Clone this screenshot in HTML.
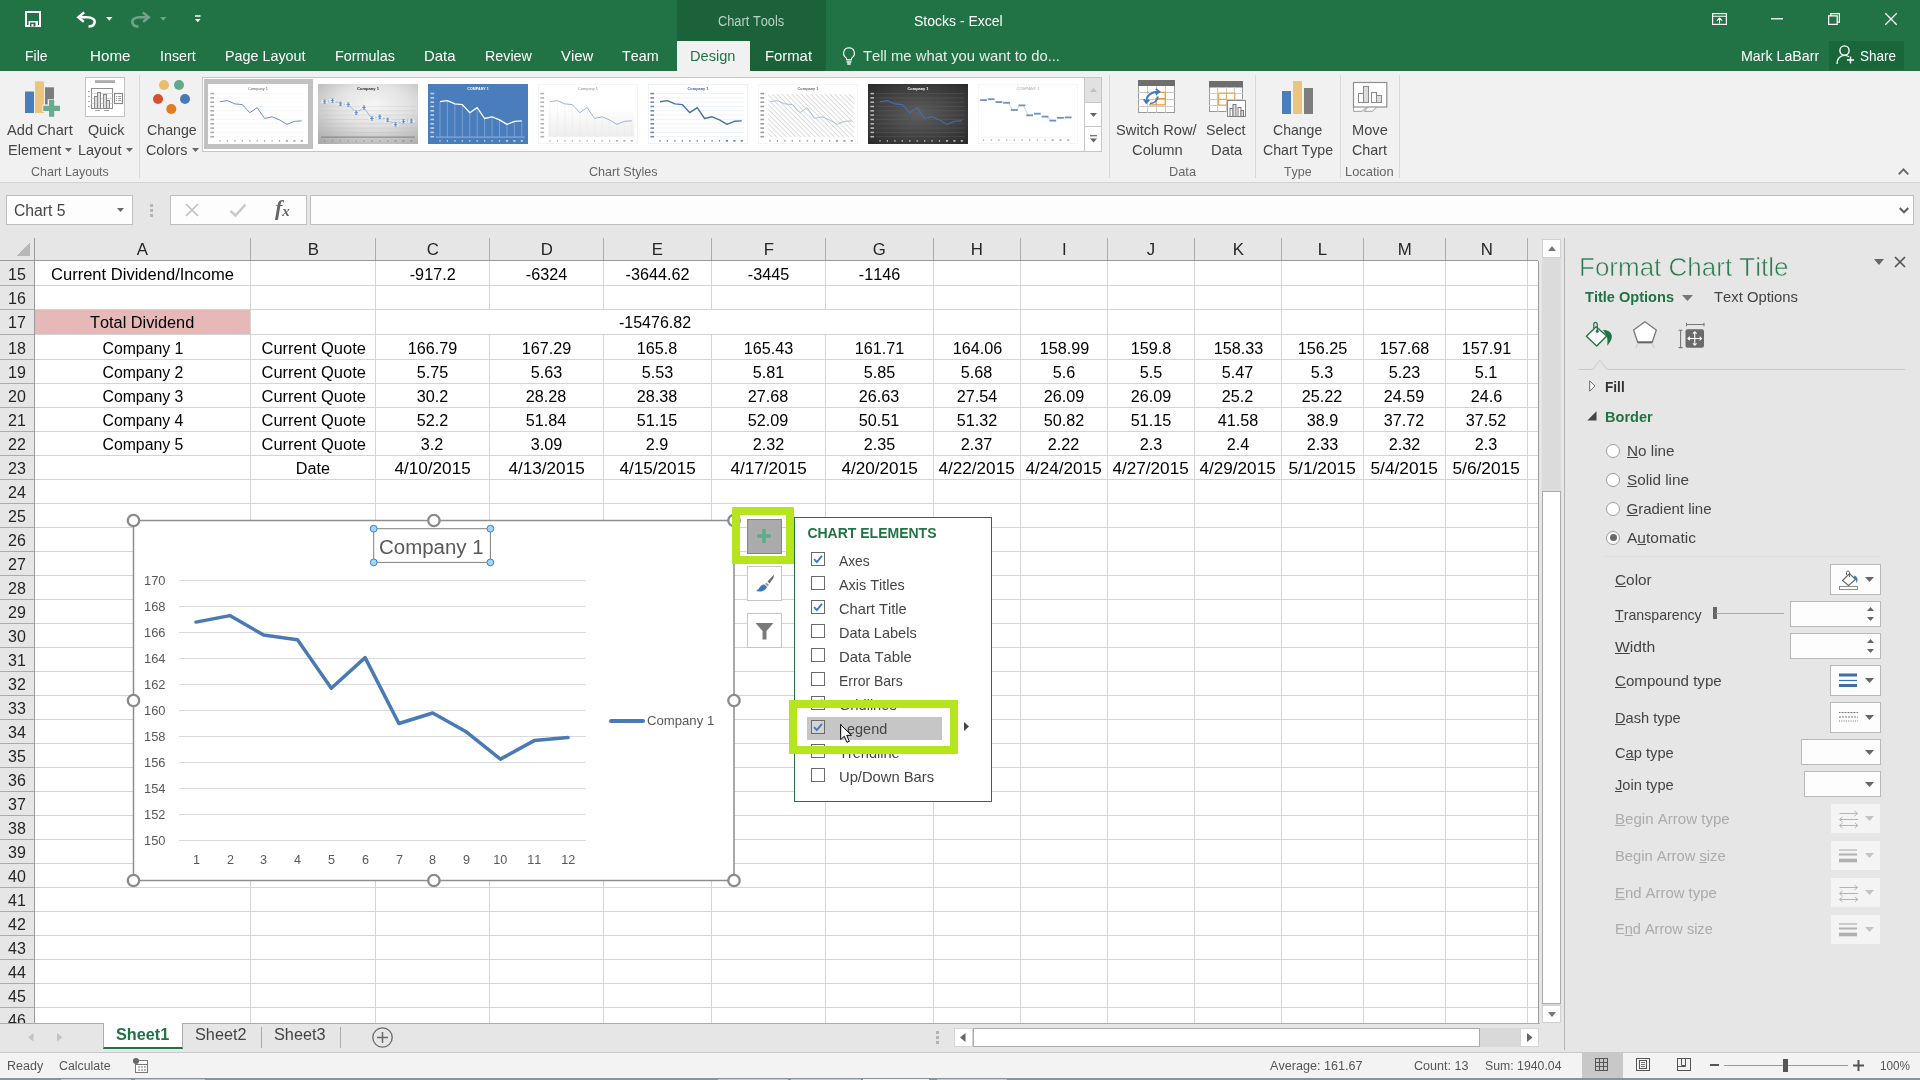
<!DOCTYPE html>
<html lang="en"><head><meta charset="utf-8"><title>Stocks - Excel</title>
<style>
html,body{margin:0;padding:0;}
body{width:1920px;height:1080px;overflow:hidden;position:relative;background:#e6e6e6;font-family:"Liberation Sans",sans-serif;color:#444;font-kerning:none;}
div,span.t,svg{position:absolute;box-sizing:border-box;}
span.t{white-space:nowrap;line-height:1;display:block;}
svg{overflow:visible;}
u{text-decoration:underline;text-underline-offset:1px;text-decoration-thickness:1px;}
</style></head><body>
<div id="app" style="left:0;top:0;width:1920px;height:1080px;will-change:transform;">

<div style="left:0px;top:0px;width:1920px;height:71px;background:#217346;"></div>
<div style="left:677px;top:0px;width:149px;height:71px;background:#1b6139;"></div>
<div style="left:677px;top:41px;width:73px;height:31px;background:#f1f1f1;"></div>
<div style="left:1829px;top:41px;width:75px;height:29px;background:#18663a;"></div>
<svg style="left:25px;top:11px;" width="16" height="16" viewBox="0 0 16 16"><rect x="1" y="1" width="14" height="14" fill="none" stroke="#fff" stroke-width="2"/><rect x="3.500" y="10" width="9.500" height="5.500" fill="#fff"/><rect x="5" y="11.500" width="5.500" height="4" fill="#217346"/><rect x="6.500" y="13" width="2" height="2.500" fill="#fff"/></svg>
<svg style="left:76px;top:11px;" width="22" height="17" viewBox="0 0 22 17"><path d="M3 6.300H11C16 6.300 19.300 8.500 18.600 11.600C18 14.400 15.500 15.500 12.500 15.500" fill="none" stroke="#fff" stroke-width="2.500"/><path d="M8.200 1.400L2.300 6.300L7.800 10.900" fill="none" stroke="#fff" stroke-width="2.500"/></svg>
<svg style="left:106px;top:17px;" width="6.5" height="3.7" viewBox="0 0 6.5 3.7"><path d="M0 0h6.500L3.250 3.700z" fill="#fff"/></svg>
<svg style="left:129px;top:11px;" width="22" height="17" viewBox="0 0 22 17"><g opacity="0.36"><path d="M19 6.300H11C6 6.300 2.700 8.500 3.400 11.600C4 14.400 6.500 15.500 9.500 15.500" fill="none" stroke="#fff" stroke-width="2.500"/><path d="M13.800 1.400L19.700 6.300L14.200 10.900" fill="none" stroke="#fff" stroke-width="2.500"/></g></svg>
<svg style="left:160px;top:17px;" width="6.5" height="3.7" viewBox="0 0 6.5 3.7"><path d="M0 0h6.500L3.250 3.700z" fill="#fff" opacity="0.36"/></svg>
<svg style="left:194.7px;top:15px;" width="5.6" height="8" viewBox="0 0 5.6 8"><path d="M0 1h5.600" stroke="#fff" stroke-width="1.500"/><path d="M0 4h5.600L2.800 7.300z" fill="#fff"/></svg>
<svg style="left:1712px;top:13px;" width="15" height="12" viewBox="0 0 15 12"><rect x="0.6" y="0.6" width="13.8" height="10.8" fill="none" stroke="#fff" stroke-width="1.2"/><path d="M0.6 3.2h13.8 M7.500 10.500V5.200 M4.900 7.700L7.500 5.100L10.100 7.700" fill="none" stroke="#fff" stroke-width="1.1"/></svg>
<svg style="left:1771px;top:18px;" width="12" height="2" viewBox="0 0 12 2"><path d="M0 0.8h12" stroke="#fff" stroke-width="1.3"/></svg>
<svg style="left:1828px;top:13px;" width="12" height="12" viewBox="0 0 12 12"><path d="M0.6 2.8h8.6v8.6h-8.6z M2.8 2.8v-2.2h8.6v8.6h-2.2" fill="none" stroke="#fff" stroke-width="1.2"/></svg>
<svg style="left:1885px;top:13px;" width="12" height="12" viewBox="0 0 12 12"><path d="M0.3 0.3L11.7 11.7 M11.7 0.3L0.3 11.7" stroke="#fff" stroke-width="1.3"/></svg>
<span class="t" style="left:718.30px;top:14.00px;font-size:14px;color:#b9d3c4;transform:scaleX(0.9149);transform-origin:0 50%;">Chart Tools</span>
<span class="t" style="left:914.30px;top:13.00px;font-size:15px;color:#fff;transform:scaleX(0.9334);transform-origin:0 50%;">Stocks - Excel</span>
<span class="t" style="left:25.00px;top:48.00px;font-size:15px;color:#fff;transform:scaleX(0.9309);transform-origin:0 50%;">File</span>
<span class="t" style="left:90.00px;top:48.00px;font-size:15px;color:#fff;transform:scaleX(1.0122);transform-origin:0 50%;">Home</span>
<span class="t" style="left:160.00px;top:48.00px;font-size:15px;color:#fff;transform:scaleX(0.9516);transform-origin:0 50%;">Insert</span>
<span class="t" style="left:225.00px;top:48.00px;font-size:15px;color:#fff;transform:scaleX(0.9557);transform-origin:0 50%;">Page Layout</span>
<span class="t" style="left:335.00px;top:48.00px;font-size:15px;color:#fff;transform:scaleX(0.9598);transform-origin:0 50%;">Formulas</span>
<span class="t" style="left:424.00px;top:48.00px;font-size:15px;color:#fff;transform:scaleX(0.9942);transform-origin:0 50%;">Data</span>
<span class="t" style="left:484.80px;top:48.00px;font-size:15px;color:#fff;transform:scaleX(0.9536);transform-origin:0 50%;">Review</span>
<span class="t" style="left:560.70px;top:48.00px;font-size:15px;color:#fff;transform:scaleX(0.9935);transform-origin:0 50%;">View</span>
<span class="t" style="left:622.00px;top:48.00px;font-size:15px;color:#fff;transform:scaleX(0.9546);transform-origin:0 50%;">Team</span>
<span class="t" style="left:765.00px;top:48.00px;font-size:15px;color:#fff;transform:scaleX(0.9894);transform-origin:0 50%;">Format</span>
<span class="t" style="left:690.00px;top:48.00px;font-size:15px;color:#217346;transform:scaleX(0.9745);transform-origin:0 50%;">Design</span>
<svg style="left:842.8px;top:47px;" width="12" height="18" viewBox="0 0 12 18"><path d="M6 0.800a5.400 5.400 0 0 0-3.100 9.800c.6.500.8 1.100.8 2.200h4.600c0-1.100.2-1.700.8-2.200A5.400 5.400 0 0 0 6 0.800z" fill="none" stroke="#fff" stroke-width="1.150"/><path d="M3.700 15h4.600 M4.300 17h3.400" stroke="#fff" stroke-width="1.300"/></svg>
<span class="t" style="left:862.60px;top:48.00px;font-size:15px;color:#e4efe8;transform:scaleX(0.9886);transform-origin:0 50%;">Tell me what you want to do...</span>
<span class="t" style="left:1740.60px;top:48.00px;font-size:15px;color:#fff;transform:scaleX(0.9476);transform-origin:0 50%;">Mark LaBarr</span>
<svg style="left:1836px;top:45px;" width="19" height="20" viewBox="0 0 19 20"><circle cx="8.5" cy="5.5" r="4.6" fill="none" stroke="#fff" stroke-width="1.4"/><path d="M1 19c0-5 3-8.6 7.5-8.6 1.8 0 3.3.5 4.5 1.4" fill="none" stroke="#fff" stroke-width="1.4"/><path d="M14.5 11.5v7 M11 15h7" stroke="#fff" stroke-width="1.4"/></svg>
<span class="t" style="left:1859.60px;top:48.00px;font-size:15px;color:#fff;transform:scaleX(0.8994);transform-origin:0 50%;">Share</span>
<div style="left:0px;top:71px;width:1920px;height:111px;background:#f1f1f1;"></div>
<div style="left:0px;top:182px;width:1920px;height:1px;background:#d2d2d2;"></div>
<div style="left:139px;top:75px;width:1px;height:103px;background:#d8d8d8;"></div>
<div style="left:1109px;top:75px;width:1px;height:103px;background:#d8d8d8;"></div>
<div style="left:1255px;top:75px;width:1px;height:103px;background:#d8d8d8;"></div>
<div style="left:1340px;top:75px;width:1px;height:103px;background:#d8d8d8;"></div>
<div style="left:1399px;top:75px;width:1px;height:103px;background:#d8d8d8;"></div>
<span class="t" style="left:30.50px;top:165.00px;font-size:13px;color:#666666;transform:scaleX(0.9613);transform-origin:0 50%;">Chart Layouts</span>
<span class="t" style="left:589.00px;top:165.00px;font-size:13px;color:#666666;transform:scaleX(0.9675);transform-origin:0 50%;">Chart Styles</span>
<span class="t" style="left:1169.00px;top:165.00px;font-size:13px;color:#666666;transform:scaleX(0.9832);transform-origin:0 50%;">Data</span>
<span class="t" style="left:1284.00px;top:165.00px;font-size:13px;color:#666666;transform:scaleX(0.9584);transform-origin:0 50%;">Type</span>
<span class="t" style="left:1345.00px;top:165.00px;font-size:13px;color:#666666;transform:scaleX(0.9908);transform-origin:0 50%;">Location</span>
<span class="t" style="left:6.70px;top:122.00px;font-size:15px;color:#444444;transform:scaleX(0.9743);transform-origin:0 50%;">Add Chart</span>
<span class="t" style="left:8.30px;top:142.00px;font-size:15px;color:#444444;transform:scaleX(0.9704);transform-origin:0 50%;">Element</span>
<span class="t" style="left:87.50px;top:122.00px;font-size:15px;color:#444444;transform:scaleX(0.9520);transform-origin:0 50%;">Quick</span>
<span class="t" style="left:78.30px;top:142.00px;font-size:15px;color:#444444;transform:scaleX(0.9637);transform-origin:0 50%;">Layout</span>
<span class="t" style="left:147.00px;top:122.00px;font-size:15px;color:#444444;transform:scaleX(0.9459);transform-origin:0 50%;">Change</span>
<span class="t" style="left:146.00px;top:142.00px;font-size:15px;color:#444444;transform:scaleX(0.9574);transform-origin:0 50%;">Colors</span>
<span class="t" style="left:1116.00px;top:122.00px;font-size:15px;color:#444444;transform:scaleX(0.9779);transform-origin:0 50%;">Switch Row/</span>
<span class="t" style="left:1132.00px;top:142.00px;font-size:15px;color:#444444;transform:scaleX(0.9828);transform-origin:0 50%;">Column</span>
<span class="t" style="left:1206.30px;top:122.00px;font-size:15px;color:#444444;transform:scaleX(0.9475);transform-origin:0 50%;">Select</span>
<span class="t" style="left:1210.50px;top:142.00px;font-size:15px;color:#444444;transform:scaleX(0.9847);transform-origin:0 50%;">Data</span>
<span class="t" style="left:1273.30px;top:122.00px;font-size:15px;color:#444444;transform:scaleX(0.9364);transform-origin:0 50%;">Change</span>
<span class="t" style="left:1262.50px;top:142.00px;font-size:15px;color:#444444;transform:scaleX(0.9435);transform-origin:0 50%;">Chart Type</span>
<span class="t" style="left:1351.70px;top:122.00px;font-size:15px;color:#444444;transform:scaleX(0.9760);transform-origin:0 50%;">Move</span>
<span class="t" style="left:1352.00px;top:142.00px;font-size:15px;color:#444444;transform:scaleX(0.9542);transform-origin:0 50%;">Chart</span>
<svg style="left:65.3px;top:148px;" width="7" height="4" viewBox="0 0 7 4"><path d="M0 0h7L3.5 4z" fill="#666"/></svg>
<svg style="left:126px;top:148px;" width="7" height="4" viewBox="0 0 7 4"><path d="M0 0h7L3.5 4z" fill="#666"/></svg>
<svg style="left:192px;top:148px;" width="7" height="4" viewBox="0 0 7 4"><path d="M0 0h7L3.5 4z" fill="#666"/></svg>
<svg style="left:25px;top:81px;" width="36" height="37" viewBox="0 0 36 37"><rect x="0" y="10.500" width="9" height="21.500" fill="#4a7ebb"/><rect x="10" y="0.300" width="9" height="31.700" fill="#ebc47d"/><rect x="20" y="6.300" width="9" height="17.500" fill="#7d7d7d"/><path d="M17.500 27.300h18 M26.500 18.300v18" stroke="#f1f1f1" stroke-width="7.600"/><path d="M18.300 27.400h16.700 M26.600 19v16.800" stroke="#69ab90" stroke-width="5.200"/></svg>
<svg style="left:85px;top:77px;" width="40" height="40" viewBox="0 0 40 40"><rect x="0.500" y="0.500" width="39" height="39" fill="#fff" stroke="#c2c2c2"/><rect x="10" y="3.200" width="20" height="2.800" fill="#ababab"/><rect x="6.500" y="11.500" width="21" height="20" fill="#fff" stroke="#8f8f8f"/><path d="M6.500 16.500h21 M6.500 21.500h21 M6.500 26.500h21" stroke="#d4d4d4"/><path d="M3 14.500h1.800 M3 19.500h1.800 M3 24.500h1.800 M3 29.500h1.800 M10 33.500h5 M19 33.500h5" stroke="#a5a5a5"/><rect x="9.500" y="19.500" width="3" height="12" fill="#ddd" stroke="#8a8a8a"/><rect x="12.500" y="15.500" width="3" height="16" fill="#ddd" stroke="#8a8a8a"/><rect x="18.500" y="17.500" width="3" height="14" fill="#ddd" stroke="#8a8a8a"/><rect x="21.500" y="23.500" width="3" height="8" fill="#ddd" stroke="#8a8a8a"/><rect x="29.500" y="16.500" width="8" height="10" fill="#fff" stroke="#8a8a8a" stroke-width="1.200"/><path d="M31 19.500h1.200 M33.200 19.500h3 M31 21.500h1.200 M33.200 21.500h3 M31 23.500h1.200 M33.200 23.500h3" stroke="#8a8a8a" stroke-width="0.900"/></svg>
<svg style="left:152px;top:79px;" width="40" height="36" viewBox="0 0 40 36"><circle cx="12" cy="6" r="5" fill="#eabd6e"/><circle cx="27" cy="6" r="5" fill="#62a88b"/><circle cx="6" cy="20" r="5" fill="#d5502f"/><circle cx="33" cy="20" r="5" fill="#4579b7"/><circle cx="19.300" cy="30" r="5" fill="#e27c1f"/></svg>
<div style="left:202px;top:77px;width:900px;height:75px;background:#fff;border:1px solid #c6c6c6;"></div>
<div style="left:203.5px;top:79px;width:109.5px;height:69.5px;background:#c1c1c1;"></div>
<svg width="0" height="0" style="left:0;top:0"><defs><radialGradient id="g1" cx="0.55" cy="0.35" r="0.800"><stop offset="0" stop-color="#f6f6f6"/><stop offset="0.450" stop-color="#e2e2e2"/><stop offset="1" stop-color="#ababab"/></radialGradient><radialGradient id="g6" cx="0.5" cy="0.5" r="0.750"><stop offset="0" stop-color="#5e5e5e"/><stop offset="1" stop-color="#262626"/></radialGradient><linearGradient id="g3" x1="0" y1="0" x2="0" y2="1"><stop offset="0" stop-color="#fff"/><stop offset="1" stop-color="#ededed"/></linearGradient><pattern id="h5" width="3.400" height="3.400" patternUnits="userSpaceOnUse" patternTransform="rotate(45)"><path d="M0 0.500H3.400" stroke="#bdbdbd" stroke-width="0.550"/></pattern></defs></svg>
<svg style="left:208px;top:84px;" width="100" height="60" viewBox="0 0 100 60"><rect x="0" y="0" width="100" height="60" fill="#fff"/><path d="M7.8 9.6H96.4" stroke="#efefef" stroke-width="0.500"/><path d="M7.8 13.9H96.4" stroke="#efefef" stroke-width="0.500"/><path d="M7.8 18.2H96.4" stroke="#efefef" stroke-width="0.500"/><path d="M7.8 22.5H96.4" stroke="#efefef" stroke-width="0.500"/><path d="M7.8 26.8H96.4" stroke="#efefef" stroke-width="0.500"/><path d="M7.8 31.1H96.4" stroke="#efefef" stroke-width="0.500"/><path d="M7.8 35.5H96.4" stroke="#efefef" stroke-width="0.500"/><path d="M7.8 39.8H96.4" stroke="#efefef" stroke-width="0.500"/><path d="M7.8 44.1H96.4" stroke="#efefef" stroke-width="0.500"/><path d="M7.8 48.4H96.4" stroke="#efefef" stroke-width="0.500"/><path d="M7.8 52.7H96.4" stroke="#efefef" stroke-width="0.500"/><rect x="2.400" y="8.8" width="3.700" height="1.600" fill="#8c8c8c" opacity="0.750"/><rect x="2.400" y="13.1" width="3.700" height="1.600" fill="#8c8c8c" opacity="0.750"/><rect x="2.400" y="17.4" width="3.700" height="1.600" fill="#8c8c8c" opacity="0.750"/><rect x="2.400" y="21.7" width="3.700" height="1.600" fill="#8c8c8c" opacity="0.750"/><rect x="2.400" y="26.0" width="3.700" height="1.600" fill="#8c8c8c" opacity="0.750"/><rect x="2.400" y="30.3" width="3.700" height="1.600" fill="#8c8c8c" opacity="0.750"/><rect x="2.400" y="34.7" width="3.700" height="1.600" fill="#8c8c8c" opacity="0.750"/><rect x="2.400" y="39.0" width="3.700" height="1.600" fill="#8c8c8c" opacity="0.750"/><rect x="2.400" y="43.3" width="3.700" height="1.600" fill="#8c8c8c" opacity="0.750"/><rect x="2.400" y="47.6" width="3.700" height="1.600" fill="#8c8c8c" opacity="0.750"/><rect x="2.400" y="51.9" width="3.700" height="1.600" fill="#8c8c8c" opacity="0.750"/><rect x="11.4" y="56.0" width="1.2" height="1.700" fill="#8c8c8c" opacity="0.750"/><rect x="18.8" y="56.0" width="1.2" height="1.700" fill="#8c8c8c" opacity="0.750"/><rect x="26.3" y="56.0" width="1.2" height="1.700" fill="#8c8c8c" opacity="0.750"/><rect x="33.7" y="56.0" width="1.2" height="1.700" fill="#8c8c8c" opacity="0.750"/><rect x="41.2" y="56.0" width="1.2" height="1.700" fill="#8c8c8c" opacity="0.750"/><rect x="48.6" y="56.0" width="1.2" height="1.700" fill="#8c8c8c" opacity="0.750"/><rect x="56.0" y="56.0" width="1.2" height="1.700" fill="#8c8c8c" opacity="0.750"/><rect x="63.5" y="56.0" width="1.2" height="1.700" fill="#8c8c8c" opacity="0.750"/><rect x="70.9" y="56.0" width="1.2" height="1.700" fill="#8c8c8c" opacity="0.750"/><rect x="77.9" y="56.0" width="2.2" height="1.700" fill="#8c8c8c" opacity="0.750"/><rect x="85.3" y="56.0" width="2.2" height="1.700" fill="#8c8c8c" opacity="0.750"/><rect x="92.7" y="56.0" width="2.2" height="1.700" fill="#8c8c8c" opacity="0.750"/><polyline points="12.0,17.7 19.4,16.6 26.9,19.9 34.3,20.6 41.8,28.7 49.2,23.6 56.6,34.5 64.1,32.8 71.5,35.9 79.0,40.4 86.4,37.3 93.8,36.9" fill="none" stroke="#6a8fc3" stroke-width="1.0" stroke-linejoin="round"/><text x="50" y="5.900" text-anchor="middle" font-size="3.9" font-weight="400" fill="#5f5f5f" font-family="Liberation Sans,sans-serif">Company 1</text></svg>
<svg style="left:318px;top:84px;" width="100" height="60" viewBox="0 0 100 60"><rect x="0" y="0" width="100" height="60" fill="url(#g1)"/><path d="M3.200 22.5H97" stroke="#bdbdbd" stroke-width="0.500" opacity="0.51"/><path d="M3.200 26.8H97" stroke="#bdbdbd" stroke-width="0.500" opacity="0.58"/><path d="M3.200 31.1H97" stroke="#bdbdbd" stroke-width="0.500" opacity="0.65"/><path d="M3.200 35.5H97" stroke="#bdbdbd" stroke-width="0.500" opacity="0.72"/><path d="M3.200 39.8H97" stroke="#bdbdbd" stroke-width="0.500" opacity="0.79"/><path d="M3.200 44.1H97" stroke="#bdbdbd" stroke-width="0.500" opacity="0.86"/><path d="M3.200 48.4H97" stroke="#bdbdbd" stroke-width="0.500" opacity="0.93"/><path d="M3.200 53.1H97" stroke="#707070" stroke-width="0.800"/><rect x="6.0" y="56.0" width="1.2" height="1.700" fill="#8c8c8c" opacity="0.750"/><rect x="13.9" y="56.0" width="1.2" height="1.700" fill="#8c8c8c" opacity="0.750"/><rect x="21.8" y="56.0" width="1.2" height="1.700" fill="#8c8c8c" opacity="0.750"/><rect x="29.7" y="56.0" width="1.2" height="1.700" fill="#8c8c8c" opacity="0.750"/><rect x="37.6" y="56.0" width="1.2" height="1.700" fill="#8c8c8c" opacity="0.750"/><rect x="45.4" y="56.0" width="1.2" height="1.700" fill="#8c8c8c" opacity="0.750"/><rect x="53.3" y="56.0" width="1.2" height="1.700" fill="#8c8c8c" opacity="0.750"/><rect x="61.2" y="56.0" width="1.2" height="1.700" fill="#8c8c8c" opacity="0.750"/><rect x="69.1" y="56.0" width="1.2" height="1.700" fill="#8c8c8c" opacity="0.750"/><rect x="76.5" y="56.0" width="2.2" height="1.700" fill="#8c8c8c" opacity="0.750"/><rect x="84.4" y="56.0" width="2.2" height="1.700" fill="#8c8c8c" opacity="0.750"/><rect x="92.3" y="56.0" width="2.2" height="1.700" fill="#8c8c8c" opacity="0.750"/><polyline points="6.6,17.7 14.5,16.6 22.4,19.9 30.3,20.6 38.2,28.7 46.0,23.6 53.9,34.5 61.8,32.8 69.7,35.9 77.6,40.4 85.5,37.3 93.4,36.9" fill="none" stroke="#5f86bd" stroke-width="0.500"/><ellipse cx="6.6" cy="17.7" rx="3.300" ry="1.900" fill="#f4f8fd"/><path d="M4.7 17.7H8.5 M5.4 16.1H7.8 M5.4 19.3H7.8 M6.6 16.1V19.3" stroke="#4a7ebb" stroke-width="0.800" fill="none"/><ellipse cx="14.5" cy="16.6" rx="3.300" ry="1.900" fill="#f4f8fd"/><path d="M12.6 16.6H16.4 M13.3 15.0H15.7 M13.3 18.2H15.7 M14.5 15.0V18.2" stroke="#4a7ebb" stroke-width="0.800" fill="none"/><ellipse cx="22.4" cy="19.9" rx="3.300" ry="1.900" fill="#f4f8fd"/><path d="M20.5 19.9H24.3 M21.2 18.3H23.6 M21.2 21.5H23.6 M22.4 18.3V21.5" stroke="#4a7ebb" stroke-width="0.800" fill="none"/><ellipse cx="30.3" cy="20.6" rx="3.300" ry="1.900" fill="#f4f8fd"/><path d="M28.4 20.6H32.2 M29.1 19.0H31.5 M29.1 22.2H31.5 M30.3 19.0V22.2" stroke="#4a7ebb" stroke-width="0.800" fill="none"/><ellipse cx="38.2" cy="28.7" rx="3.300" ry="1.900" fill="#f4f8fd"/><path d="M36.3 28.7H40.1 M37.0 27.1H39.4 M37.0 30.3H39.4 M38.2 27.1V30.3" stroke="#4a7ebb" stroke-width="0.800" fill="none"/><ellipse cx="46.0" cy="23.6" rx="3.300" ry="1.900" fill="#f4f8fd"/><path d="M44.1 23.6H47.9 M44.8 22.0H47.2 M44.8 25.2H47.2 M46.0 22.0V25.2" stroke="#4a7ebb" stroke-width="0.800" fill="none"/><ellipse cx="53.9" cy="34.5" rx="3.300" ry="1.900" fill="#f4f8fd"/><path d="M52.0 34.5H55.8 M52.7 32.9H55.1 M52.7 36.1H55.1 M53.9 32.9V36.1" stroke="#4a7ebb" stroke-width="0.800" fill="none"/><ellipse cx="61.8" cy="32.8" rx="3.300" ry="1.900" fill="#f4f8fd"/><path d="M59.9 32.8H63.7 M60.6 31.2H63.0 M60.6 34.4H63.0 M61.8 31.2V34.4" stroke="#4a7ebb" stroke-width="0.800" fill="none"/><ellipse cx="69.7" cy="35.9" rx="3.300" ry="1.900" fill="#f4f8fd"/><path d="M67.8 35.9H71.6 M68.5 34.3H70.9 M68.5 37.5H70.9 M69.7 34.3V37.5" stroke="#4a7ebb" stroke-width="0.800" fill="none"/><ellipse cx="77.6" cy="40.4" rx="3.300" ry="1.900" fill="#f4f8fd"/><path d="M75.7 40.4H79.5 M76.4 38.8H78.8 M76.4 42.0H78.8 M77.6 38.8V42.0" stroke="#4a7ebb" stroke-width="0.800" fill="none"/><ellipse cx="85.5" cy="37.3" rx="3.300" ry="1.900" fill="#f4f8fd"/><path d="M83.6 37.3H87.4 M84.3 35.7H86.7 M84.3 38.9H86.7 M85.5 35.7V38.9" stroke="#4a7ebb" stroke-width="0.800" fill="none"/><ellipse cx="93.4" cy="36.9" rx="3.300" ry="1.900" fill="#f4f8fd"/><path d="M91.5 36.9H95.3 M92.2 35.3H94.6 M92.2 38.5H94.6 M93.4 35.3V38.5" stroke="#4a7ebb" stroke-width="0.800" fill="none"/><text x="50" y="5.900" text-anchor="middle" font-size="4.1" font-weight="700" fill="#262626" font-family="Liberation Sans,sans-serif">Company 1</text></svg>
<svg style="left:428px;top:84px;" width="100" height="60" viewBox="0 0 100 60"><rect x="0" y="0" width="100" height="60" fill="#4a7dbc"/><path d="M12.0 17.7V52.7" stroke="#a9c1e2" stroke-width="0.500"/><path d="M19.4 16.6V52.7" stroke="#a9c1e2" stroke-width="0.500"/><path d="M26.9 19.9V52.7" stroke="#a9c1e2" stroke-width="0.500"/><path d="M34.3 20.6V52.7" stroke="#a9c1e2" stroke-width="0.500"/><path d="M41.8 28.7V52.7" stroke="#a9c1e2" stroke-width="0.500"/><path d="M49.2 23.6V52.7" stroke="#a9c1e2" stroke-width="0.500"/><path d="M56.6 34.5V52.7" stroke="#a9c1e2" stroke-width="0.500"/><path d="M64.1 32.8V52.7" stroke="#a9c1e2" stroke-width="0.500"/><path d="M71.5 35.9V52.7" stroke="#a9c1e2" stroke-width="0.500"/><path d="M79.0 40.4V52.7" stroke="#a9c1e2" stroke-width="0.500"/><path d="M86.4 37.3V52.7" stroke="#a9c1e2" stroke-width="0.500"/><path d="M93.8 36.9V52.7" stroke="#a9c1e2" stroke-width="0.500"/><path d="M7.8 53.1H96.9" stroke="#c9d8ec" stroke-width="0.600"/><rect x="2.400" y="8.8" width="3.700" height="1.600" fill="#e8eef7" opacity="0.750"/><rect x="2.400" y="13.1" width="3.700" height="1.600" fill="#e8eef7" opacity="0.750"/><rect x="2.400" y="17.4" width="3.700" height="1.600" fill="#e8eef7" opacity="0.750"/><rect x="2.400" y="21.7" width="3.700" height="1.600" fill="#e8eef7" opacity="0.750"/><rect x="2.400" y="26.0" width="3.700" height="1.600" fill="#e8eef7" opacity="0.750"/><rect x="2.400" y="30.3" width="3.700" height="1.600" fill="#e8eef7" opacity="0.750"/><rect x="2.400" y="34.7" width="3.700" height="1.600" fill="#e8eef7" opacity="0.750"/><rect x="2.400" y="39.0" width="3.700" height="1.600" fill="#e8eef7" opacity="0.750"/><rect x="2.400" y="43.3" width="3.700" height="1.600" fill="#e8eef7" opacity="0.750"/><rect x="2.400" y="47.6" width="3.700" height="1.600" fill="#e8eef7" opacity="0.750"/><rect x="2.400" y="51.9" width="3.700" height="1.600" fill="#e8eef7" opacity="0.750"/><rect x="11.4" y="56.0" width="1.2" height="1.700" fill="#e8eef7" opacity="0.750"/><rect x="18.8" y="56.0" width="1.2" height="1.700" fill="#e8eef7" opacity="0.750"/><rect x="26.3" y="56.0" width="1.2" height="1.700" fill="#e8eef7" opacity="0.750"/><rect x="33.7" y="56.0" width="1.2" height="1.700" fill="#e8eef7" opacity="0.750"/><rect x="41.2" y="56.0" width="1.2" height="1.700" fill="#e8eef7" opacity="0.750"/><rect x="48.6" y="56.0" width="1.2" height="1.700" fill="#e8eef7" opacity="0.750"/><rect x="56.0" y="56.0" width="1.2" height="1.700" fill="#e8eef7" opacity="0.750"/><rect x="63.5" y="56.0" width="1.2" height="1.700" fill="#e8eef7" opacity="0.750"/><rect x="70.9" y="56.0" width="1.2" height="1.700" fill="#e8eef7" opacity="0.750"/><rect x="77.9" y="56.0" width="2.2" height="1.700" fill="#e8eef7" opacity="0.750"/><rect x="85.3" y="56.0" width="2.2" height="1.700" fill="#e8eef7" opacity="0.750"/><rect x="92.7" y="56.0" width="2.2" height="1.700" fill="#e8eef7" opacity="0.750"/><polyline points="12.0,17.7 19.4,16.6 26.9,19.9 34.3,20.6 41.8,28.7 49.2,23.6 56.6,34.5 64.1,32.8 71.5,35.9 79.0,40.4 86.4,37.3 93.8,36.9" fill="none" stroke="#fff" stroke-width="1.3" stroke-linejoin="round"/><text x="50" y="5.900" text-anchor="middle" font-size="3.6" font-weight="700" fill="#fff" font-family="Liberation Sans,sans-serif">COMPANY 1</text></svg>
<svg style="left:538px;top:84px;" width="100" height="60" viewBox="0 0 100 60"><rect x="0" y="0" width="100" height="60" fill="#fff"/><rect x="0.300" y="0.300" width="99.4" height="59.4" fill="none" stroke="#ededed" stroke-width="0.600"/><rect x="10.3" y="23.6" width="86.10000000000001" height="29.1" fill="url(#g3)"/><path d="M12.0 17.7V52.7" stroke="#e9e9e9" stroke-width="0.500"/><path d="M19.4 16.6V52.7" stroke="#e9e9e9" stroke-width="0.500"/><path d="M26.9 19.9V52.7" stroke="#e9e9e9" stroke-width="0.500"/><path d="M34.3 20.6V52.7" stroke="#e9e9e9" stroke-width="0.500"/><path d="M41.8 28.7V52.7" stroke="#e9e9e9" stroke-width="0.500"/><path d="M49.2 23.6V52.7" stroke="#e9e9e9" stroke-width="0.500"/><path d="M56.6 34.5V52.7" stroke="#e9e9e9" stroke-width="0.500"/><path d="M64.1 32.8V52.7" stroke="#e9e9e9" stroke-width="0.500"/><path d="M71.5 35.9V52.7" stroke="#e9e9e9" stroke-width="0.500"/><path d="M79.0 40.4V52.7" stroke="#e9e9e9" stroke-width="0.500"/><path d="M86.4 37.3V52.7" stroke="#e9e9e9" stroke-width="0.500"/><path d="M93.8 36.9V52.7" stroke="#e9e9e9" stroke-width="0.500"/><rect x="2.400" y="8.8" width="3.700" height="1.600" fill="#9a9a9a" opacity="0.750"/><rect x="2.400" y="13.1" width="3.700" height="1.600" fill="#9a9a9a" opacity="0.750"/><rect x="2.400" y="17.4" width="3.700" height="1.600" fill="#9a9a9a" opacity="0.750"/><rect x="2.400" y="21.7" width="3.700" height="1.600" fill="#9a9a9a" opacity="0.750"/><rect x="2.400" y="26.0" width="3.700" height="1.600" fill="#9a9a9a" opacity="0.750"/><rect x="2.400" y="30.3" width="3.700" height="1.600" fill="#9a9a9a" opacity="0.750"/><rect x="2.400" y="34.7" width="3.700" height="1.600" fill="#9a9a9a" opacity="0.750"/><rect x="2.400" y="39.0" width="3.700" height="1.600" fill="#9a9a9a" opacity="0.750"/><rect x="2.400" y="43.3" width="3.700" height="1.600" fill="#9a9a9a" opacity="0.750"/><rect x="2.400" y="47.6" width="3.700" height="1.600" fill="#9a9a9a" opacity="0.750"/><rect x="2.400" y="51.9" width="3.700" height="1.600" fill="#9a9a9a" opacity="0.750"/><rect x="11.4" y="56.0" width="1.2" height="1.700" fill="#9a9a9a" opacity="0.750"/><rect x="18.8" y="56.0" width="1.2" height="1.700" fill="#9a9a9a" opacity="0.750"/><rect x="26.3" y="56.0" width="1.2" height="1.700" fill="#9a9a9a" opacity="0.750"/><rect x="33.7" y="56.0" width="1.2" height="1.700" fill="#9a9a9a" opacity="0.750"/><rect x="41.2" y="56.0" width="1.2" height="1.700" fill="#9a9a9a" opacity="0.750"/><rect x="48.6" y="56.0" width="1.2" height="1.700" fill="#9a9a9a" opacity="0.750"/><rect x="56.0" y="56.0" width="1.2" height="1.700" fill="#9a9a9a" opacity="0.750"/><rect x="63.5" y="56.0" width="1.2" height="1.700" fill="#9a9a9a" opacity="0.750"/><rect x="70.9" y="56.0" width="1.2" height="1.700" fill="#9a9a9a" opacity="0.750"/><rect x="77.9" y="56.0" width="2.2" height="1.700" fill="#9a9a9a" opacity="0.750"/><rect x="85.3" y="56.0" width="2.2" height="1.700" fill="#9a9a9a" opacity="0.750"/><rect x="92.7" y="56.0" width="2.2" height="1.700" fill="#9a9a9a" opacity="0.750"/><polyline points="12.0,17.7 19.4,16.6 26.9,19.9 34.3,20.6 41.8,28.7 49.2,23.6 56.6,34.5 64.1,32.8 71.5,35.9 79.0,40.4 86.4,37.3 93.8,36.9" fill="none" stroke="#9fb4d6" stroke-width="1.0" stroke-linejoin="round"/><text x="50" y="5.900" text-anchor="middle" font-size="3.9" font-weight="400" fill="#8a8a8a" font-family="Liberation Sans,sans-serif">Company 1</text></svg>
<svg style="left:648px;top:84px;" width="100" height="60" viewBox="0 0 100 60"><rect x="0" y="0" width="100" height="60" fill="#fff"/><rect x="0.300" y="0.300" width="99.4" height="59.4" fill="none" stroke="#e4ebf5" stroke-width="0.600"/><path d="M7.8 9.6H96.4" stroke="#dce5f2" stroke-width="0.500"/><path d="M7.8 13.9H96.4" stroke="#dce5f2" stroke-width="0.500"/><path d="M7.8 18.2H96.4" stroke="#dce5f2" stroke-width="0.500"/><path d="M7.8 22.5H96.4" stroke="#dce5f2" stroke-width="0.500"/><path d="M7.8 26.8H96.4" stroke="#dce5f2" stroke-width="0.500"/><path d="M7.8 31.1H96.4" stroke="#dce5f2" stroke-width="0.500"/><path d="M7.8 35.5H96.4" stroke="#dce5f2" stroke-width="0.500"/><path d="M7.8 39.8H96.4" stroke="#dce5f2" stroke-width="0.500"/><path d="M7.8 44.1H96.4" stroke="#dce5f2" stroke-width="0.500"/><path d="M7.8 48.4H96.4" stroke="#dce5f2" stroke-width="0.500"/><path d="M7.8 52.7H96.4" stroke="#dce5f2" stroke-width="0.500"/><rect x="2.400" y="8.8" width="3.700" height="1.600" fill="#3d5f99" opacity="0.750"/><rect x="2.400" y="13.1" width="3.700" height="1.600" fill="#3d5f99" opacity="0.750"/><rect x="2.400" y="17.4" width="3.700" height="1.600" fill="#3d5f99" opacity="0.750"/><rect x="2.400" y="21.7" width="3.700" height="1.600" fill="#3d5f99" opacity="0.750"/><rect x="2.400" y="26.0" width="3.700" height="1.600" fill="#3d5f99" opacity="0.750"/><rect x="2.400" y="30.3" width="3.700" height="1.600" fill="#3d5f99" opacity="0.750"/><rect x="2.400" y="34.7" width="3.700" height="1.600" fill="#3d5f99" opacity="0.750"/><rect x="2.400" y="39.0" width="3.700" height="1.600" fill="#3d5f99" opacity="0.750"/><rect x="2.400" y="43.3" width="3.700" height="1.600" fill="#3d5f99" opacity="0.750"/><rect x="2.400" y="47.6" width="3.700" height="1.600" fill="#3d5f99" opacity="0.750"/><rect x="2.400" y="51.9" width="3.700" height="1.600" fill="#3d5f99" opacity="0.750"/><rect x="11.4" y="56.0" width="1.2" height="1.700" fill="#3d5f99" opacity="0.750"/><rect x="18.8" y="56.0" width="1.2" height="1.700" fill="#3d5f99" opacity="0.750"/><rect x="26.3" y="56.0" width="1.2" height="1.700" fill="#3d5f99" opacity="0.750"/><rect x="33.7" y="56.0" width="1.2" height="1.700" fill="#3d5f99" opacity="0.750"/><rect x="41.2" y="56.0" width="1.2" height="1.700" fill="#3d5f99" opacity="0.750"/><rect x="48.6" y="56.0" width="1.2" height="1.700" fill="#3d5f99" opacity="0.750"/><rect x="56.0" y="56.0" width="1.2" height="1.700" fill="#3d5f99" opacity="0.750"/><rect x="63.5" y="56.0" width="1.2" height="1.700" fill="#3d5f99" opacity="0.750"/><rect x="70.9" y="56.0" width="1.2" height="1.700" fill="#3d5f99" opacity="0.750"/><rect x="77.9" y="56.0" width="2.2" height="1.700" fill="#3d5f99" opacity="0.750"/><rect x="85.3" y="56.0" width="2.2" height="1.700" fill="#3d5f99" opacity="0.750"/><rect x="92.7" y="56.0" width="2.2" height="1.700" fill="#3d5f99" opacity="0.750"/><polyline points="12.0,17.7 19.4,16.6 26.9,19.9 34.3,20.6 41.8,28.7 49.2,23.6 56.6,34.5 64.1,32.8 71.5,35.9 79.0,40.4 86.4,37.3 93.8,36.9" fill="none" stroke="#4d6fa3" stroke-width="1.4" stroke-linejoin="round"/><text x="50" y="5.900" text-anchor="middle" font-size="3.9" font-weight="700" fill="#3d6099" font-family="Liberation Sans,sans-serif">Company 1</text></svg>
<svg style="left:758px;top:84px;" width="100" height="60" viewBox="0 0 100 60"><rect x="0" y="0" width="100" height="60" fill="#fff"/><rect x="0.300" y="0.300" width="99.4" height="59.4" fill="none" stroke="#ededed" stroke-width="0.600"/><rect x="10.3" y="10.1" width="86.10000000000001" height="43.1" fill="url(#h5)"/><rect x="2.400" y="8.8" width="3.700" height="1.600" fill="#7a7a7a" opacity="0.750"/><rect x="2.400" y="13.1" width="3.700" height="1.600" fill="#7a7a7a" opacity="0.750"/><rect x="2.400" y="17.4" width="3.700" height="1.600" fill="#7a7a7a" opacity="0.750"/><rect x="2.400" y="21.7" width="3.700" height="1.600" fill="#7a7a7a" opacity="0.750"/><rect x="2.400" y="26.0" width="3.700" height="1.600" fill="#7a7a7a" opacity="0.750"/><rect x="2.400" y="30.3" width="3.700" height="1.600" fill="#7a7a7a" opacity="0.750"/><rect x="2.400" y="34.7" width="3.700" height="1.600" fill="#7a7a7a" opacity="0.750"/><rect x="2.400" y="39.0" width="3.700" height="1.600" fill="#7a7a7a" opacity="0.750"/><rect x="2.400" y="43.3" width="3.700" height="1.600" fill="#7a7a7a" opacity="0.750"/><rect x="2.400" y="47.6" width="3.700" height="1.600" fill="#7a7a7a" opacity="0.750"/><rect x="2.400" y="51.9" width="3.700" height="1.600" fill="#7a7a7a" opacity="0.750"/><rect x="11.4" y="56.0" width="1.2" height="1.700" fill="#7a7a7a" opacity="0.750"/><rect x="18.8" y="56.0" width="1.2" height="1.700" fill="#7a7a7a" opacity="0.750"/><rect x="26.3" y="56.0" width="1.2" height="1.700" fill="#7a7a7a" opacity="0.750"/><rect x="33.7" y="56.0" width="1.2" height="1.700" fill="#7a7a7a" opacity="0.750"/><rect x="41.2" y="56.0" width="1.2" height="1.700" fill="#7a7a7a" opacity="0.750"/><rect x="48.6" y="56.0" width="1.2" height="1.700" fill="#7a7a7a" opacity="0.750"/><rect x="56.0" y="56.0" width="1.2" height="1.700" fill="#7a7a7a" opacity="0.750"/><rect x="63.5" y="56.0" width="1.2" height="1.700" fill="#7a7a7a" opacity="0.750"/><rect x="70.9" y="56.0" width="1.2" height="1.700" fill="#7a7a7a" opacity="0.750"/><rect x="77.9" y="56.0" width="2.2" height="1.700" fill="#7a7a7a" opacity="0.750"/><rect x="85.3" y="56.0" width="2.2" height="1.700" fill="#7a7a7a" opacity="0.750"/><rect x="92.7" y="56.0" width="2.2" height="1.700" fill="#7a7a7a" opacity="0.750"/><polyline points="12.0,17.7 19.4,16.6 26.9,19.9 34.3,20.6 41.8,28.7 49.2,23.6 56.6,34.5 64.1,32.8 71.5,35.9 79.0,40.4 86.4,37.3 93.8,36.9" fill="none" stroke="#a9bfde" stroke-width="1.0" stroke-linejoin="round"/><text x="50" y="5.900" text-anchor="middle" font-size="3.9" font-weight="700" fill="#6a6a6a" font-family="Liberation Sans,sans-serif">Company 1</text></svg>
<svg style="left:868px;top:84px;" width="100" height="60" viewBox="0 0 100 60"><rect x="0" y="0" width="100" height="60" fill="url(#g6)"/><path d="M7.8 9.6H96.4" stroke="#5d5d5d" stroke-width="0.500"/><path d="M7.8 13.9H96.4" stroke="#5d5d5d" stroke-width="0.500"/><path d="M7.8 18.2H96.4" stroke="#5d5d5d" stroke-width="0.500"/><path d="M7.8 22.5H96.4" stroke="#5d5d5d" stroke-width="0.500"/><path d="M7.8 26.8H96.4" stroke="#5d5d5d" stroke-width="0.500"/><path d="M7.8 31.1H96.4" stroke="#5d5d5d" stroke-width="0.500"/><path d="M7.8 35.5H96.4" stroke="#5d5d5d" stroke-width="0.500"/><path d="M7.8 39.8H96.4" stroke="#5d5d5d" stroke-width="0.500"/><path d="M7.8 44.1H96.4" stroke="#5d5d5d" stroke-width="0.500"/><path d="M7.8 48.4H96.4" stroke="#5d5d5d" stroke-width="0.500"/><path d="M7.8 52.7H96.4" stroke="#5d5d5d" stroke-width="0.500"/><rect x="2.400" y="8.8" width="3.700" height="1.600" fill="#e0e0e0" opacity="0.750"/><rect x="2.400" y="13.1" width="3.700" height="1.600" fill="#e0e0e0" opacity="0.750"/><rect x="2.400" y="17.4" width="3.700" height="1.600" fill="#e0e0e0" opacity="0.750"/><rect x="2.400" y="21.7" width="3.700" height="1.600" fill="#e0e0e0" opacity="0.750"/><rect x="2.400" y="26.0" width="3.700" height="1.600" fill="#e0e0e0" opacity="0.750"/><rect x="2.400" y="30.3" width="3.700" height="1.600" fill="#e0e0e0" opacity="0.750"/><rect x="2.400" y="34.7" width="3.700" height="1.600" fill="#e0e0e0" opacity="0.750"/><rect x="2.400" y="39.0" width="3.700" height="1.600" fill="#e0e0e0" opacity="0.750"/><rect x="2.400" y="43.3" width="3.700" height="1.600" fill="#e0e0e0" opacity="0.750"/><rect x="2.400" y="47.6" width="3.700" height="1.600" fill="#e0e0e0" opacity="0.750"/><rect x="2.400" y="51.9" width="3.700" height="1.600" fill="#e0e0e0" opacity="0.750"/><rect x="11.4" y="56.0" width="1.2" height="1.700" fill="#e0e0e0" opacity="0.750"/><rect x="18.8" y="56.0" width="1.2" height="1.700" fill="#e0e0e0" opacity="0.750"/><rect x="26.3" y="56.0" width="1.2" height="1.700" fill="#e0e0e0" opacity="0.750"/><rect x="33.7" y="56.0" width="1.2" height="1.700" fill="#e0e0e0" opacity="0.750"/><rect x="41.2" y="56.0" width="1.2" height="1.700" fill="#e0e0e0" opacity="0.750"/><rect x="48.6" y="56.0" width="1.2" height="1.700" fill="#e0e0e0" opacity="0.750"/><rect x="56.0" y="56.0" width="1.2" height="1.700" fill="#e0e0e0" opacity="0.750"/><rect x="63.5" y="56.0" width="1.2" height="1.700" fill="#e0e0e0" opacity="0.750"/><rect x="70.9" y="56.0" width="1.2" height="1.700" fill="#e0e0e0" opacity="0.750"/><rect x="77.9" y="56.0" width="2.2" height="1.700" fill="#e0e0e0" opacity="0.750"/><rect x="85.3" y="56.0" width="2.2" height="1.700" fill="#e0e0e0" opacity="0.750"/><rect x="92.7" y="56.0" width="2.2" height="1.700" fill="#e0e0e0" opacity="0.750"/><polyline points="12.0,17.7 19.4,16.6 26.9,19.9 34.3,20.6 41.8,28.7 49.2,23.6 56.6,34.5 64.1,32.8 71.5,35.9 79.0,40.4 86.4,37.3 93.8,36.9" fill="none" stroke="#3f6fb5" stroke-width="1.1" stroke-linejoin="round"/><text x="50" y="5.900" text-anchor="middle" font-size="3.9" font-weight="700" fill="#fff" font-family="Liberation Sans,sans-serif">Company 1</text></svg>
<svg style="left:978px;top:84px;" width="100" height="60" viewBox="0 0 100 60"><rect x="0" y="0" width="100" height="60" fill="#fff"/><rect x="0.300" y="0.300" width="99.4" height="59.4" fill="none" stroke="#efefef" stroke-width="0.600"/><rect x="4.9" y="55.3" width="1.2" height="1.700" fill="#9a9a9a" opacity="0.750"/><rect x="12.6" y="55.3" width="1.2" height="1.700" fill="#9a9a9a" opacity="0.750"/><rect x="20.3" y="55.3" width="1.2" height="1.700" fill="#9a9a9a" opacity="0.750"/><rect x="28.0" y="55.3" width="1.2" height="1.700" fill="#9a9a9a" opacity="0.750"/><rect x="35.7" y="55.3" width="1.2" height="1.700" fill="#9a9a9a" opacity="0.750"/><rect x="43.4" y="55.3" width="1.2" height="1.700" fill="#9a9a9a" opacity="0.750"/><rect x="51.1" y="55.3" width="1.2" height="1.700" fill="#9a9a9a" opacity="0.750"/><rect x="58.8" y="55.3" width="1.2" height="1.700" fill="#9a9a9a" opacity="0.750"/><rect x="66.5" y="55.3" width="1.2" height="1.700" fill="#9a9a9a" opacity="0.750"/><rect x="73.7" y="55.3" width="2.2" height="1.700" fill="#9a9a9a" opacity="0.750"/><rect x="81.4" y="55.3" width="2.2" height="1.700" fill="#9a9a9a" opacity="0.750"/><rect x="89.1" y="55.3" width="2.2" height="1.700" fill="#9a9a9a" opacity="0.750"/><path d="M3 53.200H93" stroke="#e3e3e3" stroke-width="0.500"/><path d="M30.6 19.8L34.3 25.0" stroke="#7f9cc9" stroke-width="0.400"/><path d="M38.3 27.0L42.0 20.4" stroke="#7f9cc9" stroke-width="0.400"/><path d="M46.0 22.4L49.7 30.3" stroke="#7f9cc9" stroke-width="0.400"/><path d="M69.1 33.6L72.8 35.6" stroke="#7f9cc9" stroke-width="0.400"/><rect x="2.1" y="15.2" width="6.800" height="1.800" fill="#4f7fc0" opacity="0.850"/><rect x="9.8" y="14.3" width="6.800" height="1.800" fill="#4f7fc0" opacity="0.850"/><rect x="17.5" y="17.2" width="6.800" height="1.800" fill="#4f7fc0" opacity="0.850"/><rect x="25.2" y="17.9" width="6.800" height="1.800" fill="#4f7fc0" opacity="0.850"/><rect x="32.9" y="25.1" width="6.800" height="1.800" fill="#4f7fc0" opacity="0.850"/><rect x="40.6" y="20.5" width="6.800" height="1.800" fill="#4f7fc0" opacity="0.850"/><rect x="48.3" y="30.4" width="6.800" height="1.800" fill="#4f7fc0" opacity="0.850"/><rect x="56.0" y="28.8" width="6.800" height="1.800" fill="#4f7fc0" opacity="0.850"/><rect x="63.7" y="31.7" width="6.800" height="1.800" fill="#4f7fc0" opacity="0.850"/><rect x="71.4" y="35.7" width="6.800" height="1.800" fill="#4f7fc0" opacity="0.850"/><rect x="79.1" y="32.9" width="6.800" height="1.800" fill="#4f7fc0" opacity="0.850"/><rect x="86.8" y="32.5" width="6.800" height="1.800" fill="#4f7fc0" opacity="0.850"/><text x="50" y="5.900" text-anchor="middle" font-size="3.9" font-weight="400" font-style="italic" fill="#a6a6a6" font-family="Liberation Sans,sans-serif">COMPANY 1</text></svg>
<div style="left:1084px;top:77px;width:18px;height:26px;background:#e1e1e1;border:1px solid #c6c6c6;"></div>
<div style="left:1084px;top:102px;width:18px;height:25px;background:#fff;border:1px solid #c6c6c6;"></div>
<div style="left:1084px;top:126px;width:18px;height:26px;background:#fff;border:1px solid #c6c6c6;"></div>
<svg style="left:1089.5px;top:88px;" width="7" height="4" viewBox="0 0 7 4"><path d="M0 4h7L3.500 0z" fill="#c0c0c0"/></svg>
<svg style="left:1089.5px;top:113px;" width="7" height="4" viewBox="0 0 7 4"><path d="M0 0h7L3.500 4z" fill="#666"/></svg>
<svg style="left:1089.5px;top:135px;" width="7" height="8" viewBox="0 0 7 8"><path d="M0 0.700h7" stroke="#666" stroke-width="1.200"/><path d="M0 3.500h7L3.500 7.500z" fill="#666"/></svg>
<svg style="left:1138px;top:80px;" width="37" height="33" viewBox="0 0 37 33"><rect x="0.500" y="0.500" width="36" height="32" fill="#fff" stroke="#9a9a9a"/><rect x="0" y="0" width="37" height="6" fill="#6e6e6e"/><path d="M0 12.500h37 M0 19.500h37 M0 26.500h37 M9.500 6v27 M18.500 6v27 M27.500 6v27" stroke="#c9c9c9"/><path d="M9 12.300H27.200V24.900H11 M18 24.900V18.600H27.200" fill="none" stroke="#e8993a" stroke-width="1.200"/><path d="M8.300 21.500C8.500 15.500 13 12 20.500 11.700" fill="none" stroke="#fff" stroke-width="4"/><path d="M8.300 21.500C8.500 15.500 13 12 20.500 11.700 M17.800 9l3.500 2.700-3.500 2.700 M5.800 19.300l2.500 3.400 3-3" fill="none" stroke="#3f7bbf" stroke-width="1.900"/><path d="M12 23.500C17 23 19.500 20 20 16.500" fill="none" stroke="#3f7bbf" stroke-width="1.700"/></svg>
<svg style="left:1209px;top:81px;" width="37" height="36" viewBox="0 0 37 36"><rect x="0.500" y="0.500" width="33" height="30" fill="#fff" stroke="#9a9a9a"/><rect x="0" y="0" width="34" height="6.500" fill="#6e6e6e"/><path d="M0 12.500h34 M0 18.500h34 M0 24.500h34 M8.500 6v25 M17.500 6v25 M25.500 6v25" stroke="#c9c9c9"/><path d="M9.600 24H9.600V12H25.800V18.500 M9.600 24H18 M9.600 18.300H17.500 M17.500 12V18.300" fill="none" stroke="#e8a85a" stroke-width="1.200"/><rect x="18.500" y="19.500" width="18" height="16" fill="#fff" stroke="#8a8a8a"/><rect x="21" y="27.500" width="3" height="8" fill="#fff" stroke="#7a7a7a"/><rect x="24" y="23.500" width="3" height="12" fill="#ddd" stroke="#7a7a7a"/><rect x="29" y="26.500" width="3" height="9" fill="#fff" stroke="#7a7a7a"/><rect x="32" y="29.500" width="2.500" height="6" fill="#ddd" stroke="#7a7a7a"/></svg>
<svg style="left:1282px;top:81px;" width="32" height="33" viewBox="0 0 32 33"><rect x="0" y="10" width="9" height="23" fill="#4a7ebb"/><rect x="11" y="0" width="9" height="33" fill="#ebc47d"/><rect x="22" y="7" width="9" height="26" fill="#7d7d7d"/></svg>
<svg style="left:1353px;top:82px;" width="35" height="31" viewBox="0 0 35 31"><path d="M0.600 25V29.300H9L13.300 25.500 M14.900 25.500L11.200 29.300H19.600L23.600 25" fill="#fff" stroke="#9a9a9a"/><rect x="0.500" y="0.500" width="33.300" height="24.500" fill="#fff" stroke="#8f8f8f" stroke-width="1.200"/><rect x="5.500" y="11.500" width="5" height="9" fill="#fff" stroke="#8a8a8a"/><rect x="10.500" y="4.500" width="5" height="16" fill="#ddd" stroke="#8a8a8a"/><rect x="18.500" y="10.500" width="5" height="10" fill="#fff" stroke="#8a8a8a"/><rect x="23.500" y="13.500" width="5" height="7" fill="#ddd" stroke="#8a8a8a"/></svg>
<svg style="left:1898px;top:168px;" width="11" height="7" viewBox="0 0 11 7"><path d="M0.700 6.300L5.500 1.300L10.300 6.300" fill="none" stroke="#666" stroke-width="1.800"/></svg>
<div style="left:6px;top:195px;width:127px;height:30px;background:#fdfdfd;border:1px solid #bebebe;"></div>
<span class="t" style="left:13.50px;top:203.00px;font-size:16px;color:#444;transform:scaleX(0.9815);transform-origin:0 50%;">Chart 5</span>
<svg style="left:117px;top:208px;" width="7" height="4" viewBox="0 0 7 4"><path d="M0 0h7L3.500 4z" fill="#666"/></svg>
<div style="left:150px;top:203.5px;width:3px;height:3px;background:#b5b5b5;"></div>
<div style="left:150px;top:208.5px;width:3px;height:3px;background:#b5b5b5;"></div>
<div style="left:150px;top:213.5px;width:3px;height:3px;background:#b5b5b5;"></div>
<div style="left:170px;top:195px;width:137px;height:30px;background:#fdfdfd;border:1px solid #bebebe;"></div>
<svg style="left:185px;top:203px;" width="14" height="14" viewBox="0 0 14 14"><path d="M1 1L13 13 M13 1L1 13" stroke="#c0c0c0" stroke-width="1.600"/></svg>
<svg style="left:229px;top:203px;" width="18" height="14" viewBox="0 0 18 14"><path d="M1.500 8L6.500 12.500L16.500 1.500" fill="none" stroke="#c8c8c8" stroke-width="2.400"/></svg>
<span class="t" style="left:275.00px;top:197.00px;font-size:22px;color:#666;font-family:'Liberation Serif',serif;font-style:italic;font-weight:700;">f</span>
<span class="t" style="left:282.30px;top:204.00px;font-size:15px;color:#666;font-family:'Liberation Serif',serif;font-style:italic;font-weight:700;">x</span>
<div style="left:310px;top:195px;width:1604px;height:30px;background:#fdfdfd;border:1px solid #bebebe;"></div>
<svg style="left:1898.5px;top:207px;" width="10" height="7" viewBox="0 0 10 7"><path d="M0.700 0.900L5 5.300L9.300 0.900" fill="none" stroke="#666" stroke-width="2.200"/></svg>
<div style="left:0px;top:238px;width:1538px;height:785px;background:#fff;overflow:hidden;"></div>
<div style="left:0px;top:238px;width:1539px;height:23px;background:#e6e6e6;"></div>
<div style="left:0px;top:261px;width:34px;height:762px;background:#e6e6e6;"></div>
<svg style="left:0px;top:0px;shape-rendering:crispEdges;" width="1560" height="1030" viewBox="0 0 1560 1030"><path d="M250.5 261V1023" stroke="#d4d4d4"/><path d="M375.5 261V1023" stroke="#d4d4d4"/><path d="M489.5 261V1023" stroke="#d4d4d4"/><path d="M603.5 261V1023" stroke="#d4d4d4"/><path d="M711.5 261V1023" stroke="#d4d4d4"/><path d="M825.5 261V1023" stroke="#d4d4d4"/><path d="M933.5 261V1023" stroke="#d4d4d4"/><path d="M1020.5 261V1023" stroke="#d4d4d4"/><path d="M1107.5 261V1023" stroke="#d4d4d4"/><path d="M1194.5 261V1023" stroke="#d4d4d4"/><path d="M1281.5 261V1023" stroke="#d4d4d4"/><path d="M1363.5 261V1023" stroke="#d4d4d4"/><path d="M1445.5 261V1023" stroke="#d4d4d4"/><path d="M1527.5 261V1023" stroke="#d4d4d4"/><path d="M34 285.5H1538" stroke="#d4d4d4"/><path d="M34 309.5H1538" stroke="#d4d4d4"/><path d="M34 334.5H1538" stroke="#d4d4d4"/><path d="M34 359.5H1538" stroke="#d4d4d4"/><path d="M34 383.5H1538" stroke="#d4d4d4"/><path d="M34 407.5H1538" stroke="#d4d4d4"/><path d="M34 431.5H1538" stroke="#d4d4d4"/><path d="M34 455.5H1538" stroke="#d4d4d4"/><path d="M34 479.5H1538" stroke="#d4d4d4"/><path d="M34 503.5H1538" stroke="#d4d4d4"/><path d="M34 527.5H1538" stroke="#d4d4d4"/><path d="M34 551.5H1538" stroke="#d4d4d4"/><path d="M34 575.5H1538" stroke="#d4d4d4"/><path d="M34 599.5H1538" stroke="#d4d4d4"/><path d="M34 623.5H1538" stroke="#d4d4d4"/><path d="M34 647.5H1538" stroke="#d4d4d4"/><path d="M34 671.5H1538" stroke="#d4d4d4"/><path d="M34 695.5H1538" stroke="#d4d4d4"/><path d="M34 719.5H1538" stroke="#d4d4d4"/><path d="M34 743.5H1538" stroke="#d4d4d4"/><path d="M34 767.5H1538" stroke="#d4d4d4"/><path d="M34 791.5H1538" stroke="#d4d4d4"/><path d="M34 815.5H1538" stroke="#d4d4d4"/><path d="M34 839.5H1538" stroke="#d4d4d4"/><path d="M34 863.5H1538" stroke="#d4d4d4"/><path d="M34 887.5H1538" stroke="#d4d4d4"/><path d="M34 911.5H1538" stroke="#d4d4d4"/><path d="M34 935.5H1538" stroke="#d4d4d4"/><path d="M34 959.5H1538" stroke="#d4d4d4"/><path d="M34 983.5H1538" stroke="#d4d4d4"/><path d="M34 1007.5H1538" stroke="#d4d4d4"/><path d="M250.5 238V261" stroke="#ababab"/><path d="M375.5 238V261" stroke="#ababab"/><path d="M489.5 238V261" stroke="#ababab"/><path d="M603.5 238V261" stroke="#ababab"/><path d="M711.5 238V261" stroke="#ababab"/><path d="M825.5 238V261" stroke="#ababab"/><path d="M933.5 238V261" stroke="#ababab"/><path d="M1020.5 238V261" stroke="#ababab"/><path d="M1107.5 238V261" stroke="#ababab"/><path d="M1194.5 238V261" stroke="#ababab"/><path d="M1281.5 238V261" stroke="#ababab"/><path d="M1363.5 238V261" stroke="#ababab"/><path d="M1445.5 238V261" stroke="#ababab"/><path d="M1527.5 238V261" stroke="#ababab"/><path d="M0 285.5H34" stroke="#ababab"/><path d="M0 309.5H34" stroke="#ababab"/><path d="M0 334.5H34" stroke="#ababab"/><path d="M0 359.5H34" stroke="#ababab"/><path d="M0 383.5H34" stroke="#ababab"/><path d="M0 407.5H34" stroke="#ababab"/><path d="M0 431.5H34" stroke="#ababab"/><path d="M0 455.5H34" stroke="#ababab"/><path d="M0 479.5H34" stroke="#ababab"/><path d="M0 503.5H34" stroke="#ababab"/><path d="M0 527.5H34" stroke="#ababab"/><path d="M0 551.5H34" stroke="#ababab"/><path d="M0 575.5H34" stroke="#ababab"/><path d="M0 599.5H34" stroke="#ababab"/><path d="M0 623.5H34" stroke="#ababab"/><path d="M0 647.5H34" stroke="#ababab"/><path d="M0 671.5H34" stroke="#ababab"/><path d="M0 695.5H34" stroke="#ababab"/><path d="M0 719.5H34" stroke="#ababab"/><path d="M0 743.5H34" stroke="#ababab"/><path d="M0 767.5H34" stroke="#ababab"/><path d="M0 791.5H34" stroke="#ababab"/><path d="M0 815.5H34" stroke="#ababab"/><path d="M0 839.5H34" stroke="#ababab"/><path d="M0 863.5H34" stroke="#ababab"/><path d="M0 887.5H34" stroke="#ababab"/><path d="M0 911.5H34" stroke="#ababab"/><path d="M0 935.5H34" stroke="#ababab"/><path d="M0 959.5H34" stroke="#ababab"/><path d="M0 983.5H34" stroke="#ababab"/><path d="M0 1007.5H34" stroke="#ababab"/><path d="M0 260.5H1538" stroke="#9b9b9b"/><path d="M34.500 238V1023" stroke="#9b9b9b"/><path d="M1538.5 261V1023" stroke="#9b9b9b"/><path d="M30 242V256H16z" fill="#b7b7b7"/></svg>
<div style="left:376px;top:310px;width:557px;height:24px;background:#fff;"></div>
<div style="left:35px;top:310px;width:215px;height:24px;background:#e6b8b7;"></div>
<span class="t" style="left:137.16px;top:242.00px;font-size:16px;color:#262626;transform:scaleX(1.0500);transform-origin:50% 50%;">A</span>
<span class="t" style="left:307.66px;top:242.00px;font-size:16px;color:#262626;transform:scaleX(1.0500);transform-origin:50% 50%;">B</span>
<span class="t" style="left:426.72px;top:242.00px;font-size:16px;color:#262626;transform:scaleX(1.0500);transform-origin:50% 50%;">C</span>
<span class="t" style="left:540.72px;top:242.00px;font-size:16px;color:#262626;transform:scaleX(1.0500);transform-origin:50% 50%;">D</span>
<span class="t" style="left:652.16px;top:242.00px;font-size:16px;color:#262626;transform:scaleX(1.0500);transform-origin:50% 50%;">E</span>
<span class="t" style="left:763.61px;top:242.00px;font-size:16px;color:#262626;transform:scaleX(1.0500);transform-origin:50% 50%;">F</span>
<span class="t" style="left:873.28px;top:242.00px;font-size:16px;color:#262626;transform:scaleX(1.0500);transform-origin:50% 50%;">G</span>
<span class="t" style="left:971.22px;top:242.00px;font-size:16px;color:#262626;transform:scaleX(1.0500);transform-origin:50% 50%;">H</span>
<span class="t" style="left:1061.78px;top:242.00px;font-size:16px;color:#262626;transform:scaleX(1.0500);transform-origin:50% 50%;">I</span>
<span class="t" style="left:1147.00px;top:242.00px;font-size:16px;color:#262626;transform:scaleX(1.0500);transform-origin:50% 50%;">J</span>
<span class="t" style="left:1232.66px;top:242.00px;font-size:16px;color:#262626;transform:scaleX(1.0500);transform-origin:50% 50%;">K</span>
<span class="t" style="left:1318.05px;top:242.00px;font-size:16px;color:#262626;transform:scaleX(1.0500);transform-origin:50% 50%;">L</span>
<span class="t" style="left:1397.84px;top:242.00px;font-size:16px;color:#262626;transform:scaleX(1.0500);transform-origin:50% 50%;">M</span>
<span class="t" style="left:1480.72px;top:242.00px;font-size:16px;color:#262626;transform:scaleX(1.0500);transform-origin:50% 50%;">N</span>
<span class="t" style="left:8.10px;top:267.00px;font-size:16px;color:#262626;">15</span>
<span class="t" style="left:8.10px;top:291.00px;font-size:16px;color:#262626;">16</span>
<span class="t" style="left:8.10px;top:315.00px;font-size:16px;color:#262626;">17</span>
<span class="t" style="left:8.10px;top:341.00px;font-size:16px;color:#262626;">18</span>
<span class="t" style="left:8.10px;top:365.00px;font-size:16px;color:#262626;">19</span>
<span class="t" style="left:8.10px;top:389.00px;font-size:16px;color:#262626;">20</span>
<span class="t" style="left:8.10px;top:413.00px;font-size:16px;color:#262626;">21</span>
<span class="t" style="left:8.10px;top:437.00px;font-size:16px;color:#262626;">22</span>
<span class="t" style="left:8.10px;top:461.00px;font-size:16px;color:#262626;">23</span>
<span class="t" style="left:8.10px;top:485.00px;font-size:16px;color:#262626;">24</span>
<span class="t" style="left:8.10px;top:509.00px;font-size:16px;color:#262626;">25</span>
<span class="t" style="left:8.10px;top:533.00px;font-size:16px;color:#262626;">26</span>
<span class="t" style="left:8.10px;top:557.00px;font-size:16px;color:#262626;">27</span>
<span class="t" style="left:8.10px;top:581.00px;font-size:16px;color:#262626;">28</span>
<span class="t" style="left:8.10px;top:605.00px;font-size:16px;color:#262626;">29</span>
<span class="t" style="left:8.10px;top:629.00px;font-size:16px;color:#262626;">30</span>
<span class="t" style="left:8.10px;top:653.00px;font-size:16px;color:#262626;">31</span>
<span class="t" style="left:8.10px;top:677.00px;font-size:16px;color:#262626;">32</span>
<span class="t" style="left:8.10px;top:701.00px;font-size:16px;color:#262626;">33</span>
<span class="t" style="left:8.10px;top:725.00px;font-size:16px;color:#262626;">34</span>
<span class="t" style="left:8.10px;top:749.00px;font-size:16px;color:#262626;">35</span>
<span class="t" style="left:8.10px;top:773.00px;font-size:16px;color:#262626;">36</span>
<span class="t" style="left:8.10px;top:797.00px;font-size:16px;color:#262626;">37</span>
<span class="t" style="left:8.10px;top:821.00px;font-size:16px;color:#262626;">38</span>
<span class="t" style="left:8.10px;top:845.00px;font-size:16px;color:#262626;">39</span>
<span class="t" style="left:8.10px;top:869.00px;font-size:16px;color:#262626;">40</span>
<span class="t" style="left:8.10px;top:893.00px;font-size:16px;color:#262626;">41</span>
<span class="t" style="left:8.10px;top:917.00px;font-size:16px;color:#262626;">42</span>
<span class="t" style="left:8.10px;top:941.00px;font-size:16px;color:#262626;">43</span>
<span class="t" style="left:8.10px;top:965.00px;font-size:16px;color:#262626;">44</span>
<span class="t" style="left:8.10px;top:989.00px;font-size:16px;color:#262626;">45</span>
<span class="t" style="left:8.10px;top:1013.00px;font-size:16px;color:#262626;">46</span>
<span class="t" style="left:54.02px;top:267.00px;font-size:16px;color:#000;transform:scaleX(1.0341);transform-origin:50% 50%;">Current Dividend/Income</span>
<span class="t" style="left:409.82px;top:267.00px;font-size:16px;color:#000;transform:scaleX(1.0120);transform-origin:50% 50%;">-917.2</span>
<span class="t" style="left:526.04px;top:267.00px;font-size:16px;color:#000;transform:scaleX(1.0120);transform-origin:50% 50%;">-6324</span>
<span class="t" style="left:625.92px;top:267.00px;font-size:16px;color:#000;transform:scaleX(1.0120);transform-origin:50% 50%;">-3644.62</span>
<span class="t" style="left:748.04px;top:267.00px;font-size:16px;color:#000;transform:scaleX(1.0120);transform-origin:50% 50%;">-3445</span>
<span class="t" style="left:859.04px;top:267.00px;font-size:16px;color:#000;transform:scaleX(1.0120);transform-origin:50% 50%;">-1146</span>
<span class="t" style="left:91.36px;top:315.00px;font-size:16px;color:#000;transform:scaleX(1.0188);transform-origin:50% 50%;">Total Dividend</span>
<span class="t" style="left:618.97px;top:315.00px;font-size:16px;color:#000;">-15476.82</span>
<span class="t" style="left:101.59px;top:341.00px;font-size:16px;color:#000;transform:scaleX(0.9875);transform-origin:50% 50%;">Company 1</span>
<span class="t" style="left:263.31px;top:341.00px;font-size:16px;color:#000;transform:scaleX(1.0298);transform-origin:50% 50%;">Current Quote</span>
<span class="t" style="left:101.59px;top:365.00px;font-size:16px;color:#000;transform:scaleX(0.9875);transform-origin:50% 50%;">Company 2</span>
<span class="t" style="left:263.31px;top:365.00px;font-size:16px;color:#000;transform:scaleX(1.0298);transform-origin:50% 50%;">Current Quote</span>
<span class="t" style="left:101.59px;top:389.00px;font-size:16px;color:#000;transform:scaleX(0.9875);transform-origin:50% 50%;">Company 3</span>
<span class="t" style="left:263.31px;top:389.00px;font-size:16px;color:#000;transform:scaleX(1.0298);transform-origin:50% 50%;">Current Quote</span>
<span class="t" style="left:101.59px;top:413.00px;font-size:16px;color:#000;transform:scaleX(0.9875);transform-origin:50% 50%;">Company 4</span>
<span class="t" style="left:263.31px;top:413.00px;font-size:16px;color:#000;transform:scaleX(1.0298);transform-origin:50% 50%;">Current Quote</span>
<span class="t" style="left:101.59px;top:437.00px;font-size:16px;color:#000;transform:scaleX(0.9875);transform-origin:50% 50%;">Company 5</span>
<span class="t" style="left:263.31px;top:437.00px;font-size:16px;color:#000;transform:scaleX(1.0298);transform-origin:50% 50%;">Current Quote</span>
<span class="t" style="left:296.10px;top:461.00px;font-size:16px;color:#000;transform:scaleX(1.0120);transform-origin:50% 50%;">Date</span>
<span class="t" style="left:408.03px;top:341.00px;font-size:16px;color:#000;transform:scaleX(1.0120);transform-origin:50% 50%;">166.79</span>
<span class="t" style="left:522.03px;top:341.00px;font-size:16px;color:#000;transform:scaleX(1.0120);transform-origin:50% 50%;">167.29</span>
<span class="t" style="left:637.48px;top:341.00px;font-size:16px;color:#000;transform:scaleX(1.0120);transform-origin:50% 50%;">165.8</span>
<span class="t" style="left:744.03px;top:341.00px;font-size:16px;color:#000;transform:scaleX(1.0120);transform-origin:50% 50%;">165.43</span>
<span class="t" style="left:855.03px;top:341.00px;font-size:16px;color:#000;transform:scaleX(1.0120);transform-origin:50% 50%;">161.71</span>
<span class="t" style="left:952.53px;top:341.00px;font-size:16px;color:#000;transform:scaleX(1.0120);transform-origin:50% 50%;">164.06</span>
<span class="t" style="left:1039.53px;top:341.00px;font-size:16px;color:#000;transform:scaleX(1.0120);transform-origin:50% 50%;">158.99</span>
<span class="t" style="left:1130.98px;top:341.00px;font-size:16px;color:#000;transform:scaleX(1.0120);transform-origin:50% 50%;">159.8</span>
<span class="t" style="left:1213.53px;top:341.00px;font-size:16px;color:#000;transform:scaleX(1.0120);transform-origin:50% 50%;">158.33</span>
<span class="t" style="left:1298.03px;top:341.00px;font-size:16px;color:#000;transform:scaleX(1.0120);transform-origin:50% 50%;">156.25</span>
<span class="t" style="left:1380.03px;top:341.00px;font-size:16px;color:#000;transform:scaleX(1.0120);transform-origin:50% 50%;">157.68</span>
<span class="t" style="left:1462.03px;top:341.00px;font-size:16px;color:#000;transform:scaleX(1.0120);transform-origin:50% 50%;">157.91</span>
<span class="t" style="left:416.93px;top:365.00px;font-size:16px;color:#000;transform:scaleX(1.0120);transform-origin:50% 50%;">5.75</span>
<span class="t" style="left:530.93px;top:365.00px;font-size:16px;color:#000;transform:scaleX(1.0120);transform-origin:50% 50%;">5.63</span>
<span class="t" style="left:641.93px;top:365.00px;font-size:16px;color:#000;transform:scaleX(1.0120);transform-origin:50% 50%;">5.53</span>
<span class="t" style="left:752.93px;top:365.00px;font-size:16px;color:#000;transform:scaleX(1.0120);transform-origin:50% 50%;">5.81</span>
<span class="t" style="left:863.93px;top:365.00px;font-size:16px;color:#000;transform:scaleX(1.0120);transform-origin:50% 50%;">5.85</span>
<span class="t" style="left:961.43px;top:365.00px;font-size:16px;color:#000;transform:scaleX(1.0120);transform-origin:50% 50%;">5.68</span>
<span class="t" style="left:1052.88px;top:365.00px;font-size:16px;color:#000;transform:scaleX(1.0120);transform-origin:50% 50%;">5.6</span>
<span class="t" style="left:1139.88px;top:365.00px;font-size:16px;color:#000;transform:scaleX(1.0120);transform-origin:50% 50%;">5.5</span>
<span class="t" style="left:1222.43px;top:365.00px;font-size:16px;color:#000;transform:scaleX(1.0120);transform-origin:50% 50%;">5.47</span>
<span class="t" style="left:1311.38px;top:365.00px;font-size:16px;color:#000;transform:scaleX(1.0120);transform-origin:50% 50%;">5.3</span>
<span class="t" style="left:1388.93px;top:365.00px;font-size:16px;color:#000;transform:scaleX(1.0120);transform-origin:50% 50%;">5.23</span>
<span class="t" style="left:1475.38px;top:365.00px;font-size:16px;color:#000;transform:scaleX(1.0120);transform-origin:50% 50%;">5.1</span>
<span class="t" style="left:416.93px;top:389.00px;font-size:16px;color:#000;transform:scaleX(1.0120);transform-origin:50% 50%;">30.2</span>
<span class="t" style="left:526.48px;top:389.00px;font-size:16px;color:#000;transform:scaleX(1.0120);transform-origin:50% 50%;">28.28</span>
<span class="t" style="left:637.48px;top:389.00px;font-size:16px;color:#000;transform:scaleX(1.0120);transform-origin:50% 50%;">28.38</span>
<span class="t" style="left:748.48px;top:389.00px;font-size:16px;color:#000;transform:scaleX(1.0120);transform-origin:50% 50%;">27.68</span>
<span class="t" style="left:859.48px;top:389.00px;font-size:16px;color:#000;transform:scaleX(1.0120);transform-origin:50% 50%;">26.63</span>
<span class="t" style="left:956.98px;top:389.00px;font-size:16px;color:#000;transform:scaleX(1.0120);transform-origin:50% 50%;">27.54</span>
<span class="t" style="left:1043.98px;top:389.00px;font-size:16px;color:#000;transform:scaleX(1.0120);transform-origin:50% 50%;">26.09</span>
<span class="t" style="left:1130.98px;top:389.00px;font-size:16px;color:#000;transform:scaleX(1.0120);transform-origin:50% 50%;">26.09</span>
<span class="t" style="left:1222.43px;top:389.00px;font-size:16px;color:#000;transform:scaleX(1.0120);transform-origin:50% 50%;">25.2</span>
<span class="t" style="left:1302.48px;top:389.00px;font-size:16px;color:#000;transform:scaleX(1.0120);transform-origin:50% 50%;">25.22</span>
<span class="t" style="left:1384.48px;top:389.00px;font-size:16px;color:#000;transform:scaleX(1.0120);transform-origin:50% 50%;">24.59</span>
<span class="t" style="left:1470.93px;top:389.00px;font-size:16px;color:#000;transform:scaleX(1.0120);transform-origin:50% 50%;">24.6</span>
<span class="t" style="left:416.93px;top:413.00px;font-size:16px;color:#000;transform:scaleX(1.0120);transform-origin:50% 50%;">52.2</span>
<span class="t" style="left:526.48px;top:413.00px;font-size:16px;color:#000;transform:scaleX(1.0120);transform-origin:50% 50%;">51.84</span>
<span class="t" style="left:637.48px;top:413.00px;font-size:16px;color:#000;transform:scaleX(1.0120);transform-origin:50% 50%;">51.15</span>
<span class="t" style="left:748.48px;top:413.00px;font-size:16px;color:#000;transform:scaleX(1.0120);transform-origin:50% 50%;">52.09</span>
<span class="t" style="left:859.48px;top:413.00px;font-size:16px;color:#000;transform:scaleX(1.0120);transform-origin:50% 50%;">50.51</span>
<span class="t" style="left:956.98px;top:413.00px;font-size:16px;color:#000;transform:scaleX(1.0120);transform-origin:50% 50%;">51.32</span>
<span class="t" style="left:1043.98px;top:413.00px;font-size:16px;color:#000;transform:scaleX(1.0120);transform-origin:50% 50%;">50.82</span>
<span class="t" style="left:1130.98px;top:413.00px;font-size:16px;color:#000;transform:scaleX(1.0120);transform-origin:50% 50%;">51.15</span>
<span class="t" style="left:1217.98px;top:413.00px;font-size:16px;color:#000;transform:scaleX(1.0120);transform-origin:50% 50%;">41.58</span>
<span class="t" style="left:1306.93px;top:413.00px;font-size:16px;color:#000;transform:scaleX(1.0120);transform-origin:50% 50%;">38.9</span>
<span class="t" style="left:1384.48px;top:413.00px;font-size:16px;color:#000;transform:scaleX(1.0120);transform-origin:50% 50%;">37.72</span>
<span class="t" style="left:1466.48px;top:413.00px;font-size:16px;color:#000;transform:scaleX(1.0120);transform-origin:50% 50%;">37.52</span>
<span class="t" style="left:421.38px;top:437.00px;font-size:16px;color:#000;transform:scaleX(1.0120);transform-origin:50% 50%;">3.2</span>
<span class="t" style="left:530.93px;top:437.00px;font-size:16px;color:#000;transform:scaleX(1.0120);transform-origin:50% 50%;">3.09</span>
<span class="t" style="left:646.38px;top:437.00px;font-size:16px;color:#000;transform:scaleX(1.0120);transform-origin:50% 50%;">2.9</span>
<span class="t" style="left:752.93px;top:437.00px;font-size:16px;color:#000;transform:scaleX(1.0120);transform-origin:50% 50%;">2.32</span>
<span class="t" style="left:863.93px;top:437.00px;font-size:16px;color:#000;transform:scaleX(1.0120);transform-origin:50% 50%;">2.35</span>
<span class="t" style="left:961.43px;top:437.00px;font-size:16px;color:#000;transform:scaleX(1.0120);transform-origin:50% 50%;">2.37</span>
<span class="t" style="left:1048.43px;top:437.00px;font-size:16px;color:#000;transform:scaleX(1.0120);transform-origin:50% 50%;">2.22</span>
<span class="t" style="left:1139.88px;top:437.00px;font-size:16px;color:#000;transform:scaleX(1.0120);transform-origin:50% 50%;">2.3</span>
<span class="t" style="left:1226.88px;top:437.00px;font-size:16px;color:#000;transform:scaleX(1.0120);transform-origin:50% 50%;">2.4</span>
<span class="t" style="left:1306.93px;top:437.00px;font-size:16px;color:#000;transform:scaleX(1.0120);transform-origin:50% 50%;">2.33</span>
<span class="t" style="left:1388.93px;top:437.00px;font-size:16px;color:#000;transform:scaleX(1.0120);transform-origin:50% 50%;">2.32</span>
<span class="t" style="left:1475.38px;top:437.00px;font-size:16px;color:#000;transform:scaleX(1.0120);transform-origin:50% 50%;">2.3</span>
<span class="t" style="left:396.91px;top:461.00px;font-size:16px;color:#000;transform:scaleX(1.0705);transform-origin:50% 50%;">4/10/2015</span>
<span class="t" style="left:510.91px;top:461.00px;font-size:16px;color:#000;transform:scaleX(1.0705);transform-origin:50% 50%;">4/13/2015</span>
<span class="t" style="left:621.91px;top:461.00px;font-size:16px;color:#000;transform:scaleX(1.0705);transform-origin:50% 50%;">4/15/2015</span>
<span class="t" style="left:732.91px;top:461.00px;font-size:16px;color:#000;transform:scaleX(1.0705);transform-origin:50% 50%;">4/17/2015</span>
<span class="t" style="left:843.91px;top:461.00px;font-size:16px;color:#000;transform:scaleX(1.0705);transform-origin:50% 50%;">4/20/2015</span>
<span class="t" style="left:941.41px;top:461.00px;font-size:16px;color:#000;transform:scaleX(1.0705);transform-origin:50% 50%;">4/22/2015</span>
<span class="t" style="left:1028.41px;top:461.00px;font-size:16px;color:#000;transform:scaleX(1.0705);transform-origin:50% 50%;">4/24/2015</span>
<span class="t" style="left:1115.41px;top:461.00px;font-size:16px;color:#000;transform:scaleX(1.0705);transform-origin:50% 50%;">4/27/2015</span>
<span class="t" style="left:1202.41px;top:461.00px;font-size:16px;color:#000;transform:scaleX(1.0705);transform-origin:50% 50%;">4/29/2015</span>
<span class="t" style="left:1291.36px;top:461.00px;font-size:16px;color:#000;transform:scaleX(1.0806);transform-origin:50% 50%;">5/1/2015</span>
<span class="t" style="left:1373.36px;top:461.00px;font-size:16px;color:#000;transform:scaleX(1.0806);transform-origin:50% 50%;">5/4/2015</span>
<span class="t" style="left:1455.36px;top:461.00px;font-size:16px;color:#000;transform:scaleX(1.0806);transform-origin:50% 50%;">5/6/2015</span>
<div style="left:1540px;top:238px;width:25px;height:785px;background:#e6e6e6;"></div>
<div style="left:1542px;top:258px;width:19px;height:750px;background:#dbdbdb;"></div>
<div style="left:1542px;top:239px;width:19px;height:19px;background:#fff;border:1px solid #d0d0d0;"></div>
<svg style="left:1548px;top:245.5px;" width="8" height="5" viewBox="0 0 8 5"><path d="M0 5h8L4 0z" fill="#777"/></svg>
<div style="left:1542px;top:491px;width:19px;height:513px;background:#fff;border:1px solid #ababab;"></div>
<div style="left:1542px;top:1005px;width:19px;height:18px;background:#fff;border:1px solid #d0d0d0;"></div>
<svg style="left:1547.5px;top:1012px;" width="8.5" height="5" viewBox="0 0 8.5 5"><path d="M0 0h8L4 5z" fill="#777"/></svg>
<div style="left:134px;top:521px;width:600px;height:359.5px;background:#fff;"></div>
<svg style="left:0px;top:0px;" width="1000" height="900" viewBox="0 0 1000 900"><path d="M179 580.5H585.500" stroke="#d9d9d9" stroke-width="1"/><path d="M179 606.5H585.500" stroke="#d9d9d9" stroke-width="1"/><path d="M179 632.5H585.500" stroke="#d9d9d9" stroke-width="1"/><path d="M179 658.5H585.500" stroke="#d9d9d9" stroke-width="1"/><path d="M179 684.5H585.500" stroke="#d9d9d9" stroke-width="1"/><path d="M179 710.5H585.500" stroke="#d9d9d9" stroke-width="1"/><path d="M179 736.5H585.500" stroke="#d9d9d9" stroke-width="1"/><path d="M179 762.5H585.500" stroke="#d9d9d9" stroke-width="1"/><path d="M179 788.5H585.500" stroke="#d9d9d9" stroke-width="1"/><path d="M179 814.5H585.500" stroke="#d9d9d9" stroke-width="1"/><path d="M179 840.5H585.500" stroke="#d9d9d9" stroke-width="1"/><polyline points="196.0,622.1 229.8,615.6 263.6,635.0 297.5,639.8 331.3,688.2 365.1,657.6 398.9,723.5 432.7,713.0 466.6,732.1 500.4,759.1 534.2,740.6 568.0,737.6" fill="none" stroke="#4a7ab4" stroke-width="3.500" stroke-linejoin="round" stroke-linecap="round"/><path d="M611 721H643" stroke="#4a7ab4" stroke-width="4" stroke-linecap="round"/><rect x="133.5" y="520.5" width="600.5" height="360.0" fill="none" stroke="#8e8e8e" stroke-width="1.500"/><rect x="373.700" y="528.700" width="116.700" height="33.700" fill="none" stroke="#7f7f7f" stroke-width="1"/><circle cx="133.5" cy="520.5" r="5.700" fill="#fff" stroke="#8a8a8a" stroke-width="2.300"/><circle cx="433.9" cy="520.5" r="5.700" fill="#fff" stroke="#8a8a8a" stroke-width="2.300"/><circle cx="734" cy="520.5" r="5.700" fill="#fff" stroke="#8a8a8a" stroke-width="2.300"/><circle cx="133.5" cy="700.5" r="5.700" fill="#fff" stroke="#8a8a8a" stroke-width="2.300"/><circle cx="734" cy="700.5" r="5.700" fill="#fff" stroke="#8a8a8a" stroke-width="2.300"/><circle cx="133.5" cy="880.5" r="5.700" fill="#fff" stroke="#8a8a8a" stroke-width="2.300"/><circle cx="433.9" cy="880.5" r="5.700" fill="#fff" stroke="#8a8a8a" stroke-width="2.300"/><circle cx="734" cy="880.5" r="5.700" fill="#fff" stroke="#8a8a8a" stroke-width="2.300"/><circle cx="373.7" cy="528.7" r="3.400" fill="#a9d3f2" stroke="#2e86d6" stroke-width="1"/><circle cx="490.4" cy="528.7" r="3.400" fill="#a9d3f2" stroke="#2e86d6" stroke-width="1"/><circle cx="373.7" cy="562.4" r="3.400" fill="#a9d3f2" stroke="#2e86d6" stroke-width="1"/><circle cx="490.4" cy="562.4" r="3.400" fill="#a9d3f2" stroke="#2e86d6" stroke-width="1"/></svg>
<span class="t" style="left:143.50px;top:574.00px;font-size:13px;color:#595959;transform:scaleX(0.9912);transform-origin:0 50%;">170</span>
<span class="t" style="left:143.50px;top:600.00px;font-size:13px;color:#595959;transform:scaleX(0.9912);transform-origin:0 50%;">168</span>
<span class="t" style="left:143.50px;top:626.00px;font-size:13px;color:#595959;transform:scaleX(0.9912);transform-origin:0 50%;">166</span>
<span class="t" style="left:143.50px;top:652.00px;font-size:13px;color:#595959;transform:scaleX(0.9912);transform-origin:0 50%;">164</span>
<span class="t" style="left:143.50px;top:678.00px;font-size:13px;color:#595959;transform:scaleX(0.9912);transform-origin:0 50%;">162</span>
<span class="t" style="left:143.50px;top:704.00px;font-size:13px;color:#595959;transform:scaleX(0.9912);transform-origin:0 50%;">160</span>
<span class="t" style="left:143.50px;top:730.00px;font-size:13px;color:#595959;transform:scaleX(0.9912);transform-origin:0 50%;">158</span>
<span class="t" style="left:143.50px;top:756.00px;font-size:13px;color:#595959;transform:scaleX(0.9912);transform-origin:0 50%;">156</span>
<span class="t" style="left:143.50px;top:782.00px;font-size:13px;color:#595959;transform:scaleX(0.9912);transform-origin:0 50%;">154</span>
<span class="t" style="left:143.50px;top:808.00px;font-size:13px;color:#595959;transform:scaleX(0.9912);transform-origin:0 50%;">152</span>
<span class="t" style="left:143.50px;top:834.00px;font-size:13px;color:#595959;transform:scaleX(0.9912);transform-origin:0 50%;">150</span>
<span class="t" style="left:192.69px;top:853.00px;font-size:13px;color:#595959;transform:scaleX(0.9700);transform-origin:50% 50%;">1</span>
<span class="t" style="left:226.51px;top:853.00px;font-size:13px;color:#595959;transform:scaleX(0.9700);transform-origin:50% 50%;">2</span>
<span class="t" style="left:260.33px;top:853.00px;font-size:13px;color:#595959;transform:scaleX(0.9700);transform-origin:50% 50%;">3</span>
<span class="t" style="left:294.15px;top:853.00px;font-size:13px;color:#595959;transform:scaleX(0.9700);transform-origin:50% 50%;">4</span>
<span class="t" style="left:327.97px;top:853.00px;font-size:13px;color:#595959;transform:scaleX(0.9700);transform-origin:50% 50%;">5</span>
<span class="t" style="left:361.79px;top:853.00px;font-size:13px;color:#595959;transform:scaleX(0.9700);transform-origin:50% 50%;">6</span>
<span class="t" style="left:395.61px;top:853.00px;font-size:13px;color:#595959;transform:scaleX(0.9700);transform-origin:50% 50%;">7</span>
<span class="t" style="left:429.43px;top:853.00px;font-size:13px;color:#595959;transform:scaleX(0.9700);transform-origin:50% 50%;">8</span>
<span class="t" style="left:463.25px;top:853.00px;font-size:13px;color:#595959;transform:scaleX(0.9700);transform-origin:50% 50%;">9</span>
<span class="t" style="left:493.45px;top:853.00px;font-size:13px;color:#595959;transform:scaleX(0.9700);transform-origin:50% 50%;">10</span>
<span class="t" style="left:527.27px;top:853.00px;font-size:13px;color:#595959;transform:scaleX(0.9700);transform-origin:50% 50%;">11</span>
<span class="t" style="left:561.09px;top:853.00px;font-size:13px;color:#595959;transform:scaleX(0.9700);transform-origin:50% 50%;">12</span>
<span class="t" style="left:379.30px;top:537.00px;font-size:20px;color:#595959;transform:scaleX(1.0227);transform-origin:0 50%;">Company 1</span>
<span class="t" style="left:647.00px;top:714.00px;font-size:13px;color:#595959;transform:scaleX(1.0108);transform-origin:0 50%;">Company 1</span>
<div style="left:747px;top:566px;width:35px;height:35px;background:#fff;border:1px solid #c6c6c6;"></div>
<div style="left:747px;top:613px;width:35px;height:35px;background:#fff;border:1px solid #c6c6c6;"></div>
<div style="left:747px;top:519px;width:35px;height:35px;background:#ababab;border:1px solid #5d9c80;"></div>
<svg style="left:757px;top:529px;" width="14" height="14" viewBox="0 0 14 14"><path d="M0 7h14 M7 0v14" stroke="#5fac8b" stroke-width="3.500"/></svg>
<svg style="left:755px;top:573px;" width="20" height="20" viewBox="0 0 20 20"><path d="M19 1.500L12.500 8.500L14.500 10.500L18.500 5z" fill="#6b6b6b"/><path d="M11.500 9.500l2.500 2.500-1.500 1.500-2.500-2.500z" fill="#9a9a9a"/><path d="M9.500 11.500c-3 0-4.500 2-5.500 4l-3 2.500c4 1 9.500 0.500 11-4z" fill="#3f78b8"/></svg>
<svg style="left:755px;top:621.5px;" width="19" height="18" viewBox="0 0 19 18"><path d="M0.500 1h18l-7 8v8.500h-4v-8.500z" fill="#7a7a7a"/><path d="M3.500 2.500h12l-2.200 2.500h-7.600z" fill="#fff" opacity="0.0"/></svg>
<div style="left:794px;top:517px;width:198px;height:284.5px;background:#fff;border:1px solid #217346;"></div>
<span class="t" style="left:807.40px;top:526.00px;font-size:14px;color:#217346;font-weight:700;">CHART ELEMENTS</span>
<div style="left:807px;top:716.5px;width:135px;height:23.5px;background:#c6c6c6;"></div>
<div style="left:811px;top:552px;width:14px;height:14px;background:#fff;border:1px solid #6a6a6a;"></div>
<svg style="left:813px;top:554px;" width="10" height="10" viewBox="0 0 10 10"><path d="M1 5.200L3.800 8L9 1.800" fill="none" stroke="#3f7bbf" stroke-width="1.900"/></svg>
<span class="t" style="left:839.30px;top:553.00px;font-size:15px;color:#444444;transform:scaleX(0.9206);transform-origin:0 50%;">Axes</span>
<div style="left:811px;top:576px;width:14px;height:14px;background:#fff;border:1px solid #6a6a6a;"></div>
<span class="t" style="left:839.30px;top:577.00px;font-size:15px;color:#444444;transform:scaleX(0.9613);transform-origin:0 50%;">Axis Titles</span>
<div style="left:811px;top:600px;width:14px;height:14px;background:#fff;border:1px solid #6a6a6a;"></div>
<svg style="left:813px;top:602px;" width="10" height="10" viewBox="0 0 10 10"><path d="M1 5.200L3.800 8L9 1.800" fill="none" stroke="#3f7bbf" stroke-width="1.900"/></svg>
<span class="t" style="left:839.30px;top:601.00px;font-size:15px;color:#444444;transform:scaleX(0.9785);transform-origin:0 50%;">Chart Title</span>
<div style="left:811px;top:624px;width:14px;height:14px;background:#fff;border:1px solid #6a6a6a;"></div>
<span class="t" style="left:839.30px;top:625.00px;font-size:15px;color:#444444;transform:scaleX(0.9706);transform-origin:0 50%;">Data Labels</span>
<div style="left:811px;top:648px;width:14px;height:14px;background:#fff;border:1px solid #6a6a6a;"></div>
<span class="t" style="left:839.30px;top:649.00px;font-size:15px;color:#444444;transform:scaleX(0.9908);transform-origin:0 50%;">Data Table</span>
<div style="left:811px;top:672px;width:14px;height:14px;background:#fff;border:1px solid #6a6a6a;"></div>
<span class="t" style="left:839.30px;top:673.00px;font-size:15px;color:#444444;transform:scaleX(0.9321);transform-origin:0 50%;">Error Bars</span>
<div style="left:811px;top:696px;width:14px;height:14px;background:#fff;border:1px solid #6a6a6a;"></div>
<svg style="left:813px;top:698px;" width="10" height="10" viewBox="0 0 10 10"><path d="M1 5.200L3.800 8L9 1.800" fill="none" stroke="#3f7bbf" stroke-width="1.900"/></svg>
<span class="t" style="left:839.30px;top:697.00px;font-size:15px;color:#444444;transform:scaleX(0.9749);transform-origin:0 50%;">Gridlines</span>
<div style="left:811px;top:720px;width:14px;height:14px;background:#d4d4d4;border:1px solid #6a6a6a;"></div>
<svg style="left:813px;top:722px;" width="10" height="10" viewBox="0 0 10 10"><path d="M1 5.200L3.800 8L9 1.800" fill="none" stroke="#3f7bbf" stroke-width="1.900"/></svg>
<span class="t" style="left:839.30px;top:721.00px;font-size:15px;color:#444444;transform:scaleX(0.9630);transform-origin:0 50%;">Legend</span>
<div style="left:811px;top:744px;width:14px;height:14px;background:#fff;border:1px solid #6a6a6a;"></div>
<span class="t" style="left:839.30px;top:745.00px;font-size:15px;color:#444444;transform:scaleX(0.9707);transform-origin:0 50%;">Trendline</span>
<div style="left:811px;top:768px;width:14px;height:14px;background:#fff;border:1px solid #6a6a6a;"></div>
<span class="t" style="left:839.30px;top:769.00px;font-size:15px;color:#444444;transform:scaleX(0.9834);transform-origin:0 50%;">Up/Down Bars</span>
<svg style="left:964px;top:722px;" width="5" height="9" viewBox="0 0 5 9"><path d="M0 0L5 4.500L0 9z" fill="#444"/></svg>
<div style="left:732px;top:507px;width:62px;height:57px;border:8px solid #b5e61d;"></div>
<div style="left:789px;top:700px;width:169px;height:53.5px;border:8px solid #b5e61d;"></div>
<svg style="left:840px;top:724.3px;" width="13" height="20" viewBox="0 0 13 20"><path d="M0.700 0.700V15.500L4.300 12.200L6.900 18.300L9.300 17.300L6.700 11.300H11.500z" fill="#fff" stroke="#000" stroke-width="1" stroke-linejoin="round"/></svg>
<div style="left:1564px;top:238px;width:1px;height:812px;background:#b4b4b4;"></div>
<span class="t" style="left:1579.00px;top:254.00px;font-size:26px;color:#2a7a4f;-webkit-text-stroke:0.6px #e6e6e6;">Format Chart Title</span>
<svg style="left:1873.5px;top:258.5px;" width="10" height="6" viewBox="0 0 10 6"><path d="M0 0h10L5 6z" fill="#666"/></svg>
<svg style="left:1894px;top:256px;" width="12" height="12" viewBox="0 0 12 12"><path d="M1 1L11 11 M11 1L1 11" stroke="#555" stroke-width="1.700"/></svg>
<span class="t" style="left:1584.70px;top:289.00px;font-size:15px;color:#217346;font-weight:700;transform:scaleX(0.9710);transform-origin:0 50%;">Title Options</span>
<svg style="left:1681.5px;top:294.5px;" width="11" height="6" viewBox="0 0 11 6"><path d="M0 0h11L5.500 6z" fill="#777"/></svg>
<span class="t" style="left:1714.00px;top:289.00px;font-size:15px;color:#444444;transform:scaleX(0.9878);transform-origin:0 50%;">Text Options</span>
<svg style="left:1585px;top:320px;" width="29" height="28" viewBox="0 0 29 28"><path d="M1.400 16.300L11.100 6.700L21.700 16.100L11.700 26.100z" fill="#fff" stroke="#217346" stroke-width="1.400" stroke-linejoin="round"/><path d="M12.300 10.500V4.500a1.750 2.100 0 0 0-3.500 0V8.500" fill="none" stroke="#217346" stroke-width="1.200"/><circle cx="12.200" cy="11.200" r="1.500" fill="#217346"/><path d="M18 9.800C23.500 10 27.500 13 26.800 17.500C26.200 21 24 23.500 22.300 25.800C22.600 22 22.600 19 21.700 16.100z" fill="#217346"/></svg>
<svg style="left:1631.5px;top:321px;" width="27" height="28" viewBox="0 0 27 28"><path d="M12.900 0.800L24.300 9L20.200 21.200H5.700L1.600 9z" fill="#fff" stroke="#777" stroke-width="1.300" stroke-linejoin="round"/><path d="M5.700 21.400h14.500" stroke="#666" stroke-width="1.900"/><path d="M5.600 22.500l-1.600 4.500 M20.300 22.500l1.600 4.500" stroke="#cfcfcf" stroke-width="1.300"/></svg>
<svg style="left:1678px;top:323px;" width="28" height="27" viewBox="0 0 28 27"><path d="M8.500 1.500h17.500 M8.500 -0.300v3.600 M26 -0.300v3.600 M2.600 7.200V24.600 M0.600 7.200h4 M0.600 24.600h4" stroke="#777" stroke-width="1.100" fill="none"/><rect x="7.500" y="6.200" width="18.500" height="18.600" rx="2" fill="#6a6a6a"/><path d="M16.750 8.700v13.600 M10 15.500h13.500 M14.900 10.600l1.850-1.900 1.850 1.900 M14.900 20.400l1.850 1.900 1.850-1.900 M11.900 13.650l-1.900 1.850 1.900 1.850 M21.600 13.650l1.900 1.850-1.900 1.850" stroke="#fff" stroke-width="1.100" fill="none"/></svg>
<svg style="left:1578px;top:359px;" width="330" height="12" viewBox="0 0 330 12"><path d="M0.500 10.500H14.800L21.800 1.200L29.300 10.500H327" fill="none" stroke="#c9c9c9" stroke-width="1"/></svg>
<svg style="left:1589px;top:380px;" width="7" height="12" viewBox="0 0 7 12"><path d="M0.700 0.900L6 6L0.700 11.100z" fill="#fff" stroke="#666" stroke-width="1"/></svg>
<span class="t" style="left:1604.80px;top:379.00px;font-size:15px;color:#333;font-weight:700;transform:scaleX(0.9093);transform-origin:0 50%;">Fill</span>
<svg style="left:1586.5px;top:410.5px;" width="10" height="10" viewBox="0 0 10 10"><path d="M9.500 0.300V9.500H0.300z" fill="#444"/></svg>
<span class="t" style="left:1604.80px;top:409.00px;font-size:15px;color:#217346;font-weight:700;transform:scaleX(0.9700);transform-origin:0 50%;">Border</span>
<div style="left:1606px;top:443.6px;width:14px;height:14px;border-radius:50%;background:#fff;border:1px solid #9a9a9a;"></div>
<span class="t" style="left:1626.50px;top:443.00px;font-size:15px;color:#444444;transform:scaleX(1.0173);transform-origin:0 50%;"><u>N</u>o line</span>
<div style="left:1606px;top:472.6px;width:14px;height:14px;border-radius:50%;background:#fff;border:1px solid #9a9a9a;"></div>
<span class="t" style="left:1626.50px;top:472.00px;font-size:15px;color:#444444;transform:scaleX(1.0185);transform-origin:0 50%;"><u>S</u>olid line</span>
<div style="left:1606px;top:501.6px;width:14px;height:14px;border-radius:50%;background:#fff;border:1px solid #9a9a9a;"></div>
<span class="t" style="left:1626.50px;top:501.00px;font-size:15px;color:#444444;"><u>G</u>radient line</span>
<div style="left:1606px;top:530.6px;width:14px;height:14px;border-radius:50%;background:#fff;border:1px solid #9a9a9a;"></div>
<div style="left:1609.5px;top:534.1px;width:7px;height:7px;border-radius:50%;background:#686868;"></div>
<span class="t" style="left:1626.50px;top:530.00px;font-size:15px;color:#444444;transform:scaleX(1.0346);transform-origin:0 50%;">A<u>u</u>tomatic</span>
<div style="left:1604.5px;top:556px;width:276px;height:1px;background:#dcdcdc;"></div>
<span class="t" style="left:1614.80px;top:572.00px;font-size:15px;color:#444444;transform:scaleX(1.0239);transform-origin:0 50%;"><u>C</u>olor</span>
<span class="t" style="left:1614.80px;top:607.00px;font-size:15px;color:#444444;transform:scaleX(0.9454);transform-origin:0 50%;"><u>T</u>ransparency</span>
<span class="t" style="left:1614.80px;top:639.00px;font-size:15px;color:#444444;transform:scaleX(1.0485);transform-origin:0 50%;"><u>W</u>idth</span>
<span class="t" style="left:1614.80px;top:673.00px;font-size:15px;color:#444444;transform:scaleX(1.0075);transform-origin:0 50%;"><u>C</u>ompound type</span>
<span class="t" style="left:1614.80px;top:710.00px;font-size:15px;color:#444444;transform:scaleX(0.9728);transform-origin:0 50%;"><u>D</u>ash type</span>
<span class="t" style="left:1614.80px;top:745.00px;font-size:15px;color:#444444;transform:scaleX(0.9777);transform-origin:0 50%;">C<u>a</u>p type</span>
<span class="t" style="left:1614.80px;top:777.00px;font-size:15px;color:#444444;transform:scaleX(0.9777);transform-origin:0 50%;"><u>J</u>oin type</span>
<span class="t" style="left:1614.80px;top:811.00px;font-size:15px;color:#ababab;transform:scaleX(1.0042);transform-origin:0 50%;"><u>B</u>egin Arrow type</span>
<span class="t" style="left:1614.80px;top:848.00px;font-size:15px;color:#ababab;transform:scaleX(0.9836);transform-origin:0 50%;">Begin Arrow <u>s</u>ize</span>
<span class="t" style="left:1614.80px;top:885.00px;font-size:15px;color:#ababab;transform:scaleX(0.9917);transform-origin:0 50%;"><u>E</u>nd Arrow type</span>
<span class="t" style="left:1614.80px;top:921.00px;font-size:15px;color:#ababab;transform:scaleX(0.9686);transform-origin:0 50%;">E<u>n</u>d Arrow size</span>
<div style="left:1830px;top:564px;width:51px;height:31px;background:#fdfdfd;border:1px solid #b8b8b8;"></div>
<svg style="left:1839px;top:569px;" width="22" height="21" viewBox="0 0 22 21"><path d="M3.500 11.500L10.500 4.500L16.500 10.500L9.500 16.500z" fill="#fff" stroke="#666" stroke-width="1.100"/><path d="M10.500 8V3.500a1.500 1.500 0 0 0-3 0V6" fill="none" stroke="#666" stroke-width="1"/><path d="M15 6.500c3.500 1 4.500 4 2.500 8c0-2.500-0.800-4.500-2.800-5.800z" fill="#3f7bbf"/><rect x="0.500" y="17.500" width="18" height="3" fill="#fff" stroke="#8a8a8a"/></svg>
<svg style="left:1865px;top:577px;" width="9" height="5" viewBox="0 0 9 5"><path d="M0 0h9L4.500 5z" fill="#666"/></svg>
<div style="left:1712.5px;top:607px;width:4px;height:12px;background:#666;"></div>
<div style="left:1716px;top:613px;width:67.5px;height:1px;background:#a8a8a8;"></div>
<div style="left:1790px;top:601px;width:91px;height:26px;background:#fdfdfd;border:1px solid #b8b8b8;"></div>
<svg style="left:1866.5px;top:607px;" width="7" height="4" viewBox="0 0 7 4"><path d="M0 4h7L3.500 0z" fill="#666"/></svg>
<svg style="left:1866.5px;top:617px;" width="7" height="4" viewBox="0 0 7 4"><path d="M0 0h7L3.500 4z" fill="#666"/></svg>
<div style="left:1790px;top:633px;width:91px;height:26px;background:#fdfdfd;border:1px solid #b8b8b8;"></div>
<svg style="left:1866.5px;top:639px;" width="7" height="4" viewBox="0 0 7 4"><path d="M0 4h7L3.500 0z" fill="#666"/></svg>
<svg style="left:1866.5px;top:649px;" width="7" height="4" viewBox="0 0 7 4"><path d="M0 0h7L3.500 4z" fill="#666"/></svg>
<div style="left:1830px;top:665px;width:51px;height:31px;background:#fdfdfd;border:1px solid #b8b8b8;"></div>
<svg style="left:1839px;top:672.5px;" width="18" height="15" viewBox="0 0 18 15"><path d="M0 2h18" stroke="#3f6fa8" stroke-width="3"/><path d="M0 7.500h18" stroke="#3f6fa8" stroke-width="1.200"/><path d="M0 12.500h18" stroke="#3f6fa8" stroke-width="3"/></svg>
<svg style="left:1865px;top:678px;" width="9" height="5" viewBox="0 0 9 5"><path d="M0 0h9L4.500 5z" fill="#666"/></svg>
<div style="left:1830px;top:702px;width:51px;height:31px;background:#fdfdfd;border:1px solid #b8b8b8;"></div>
<svg style="left:1839px;top:712px;" width="19" height="12" viewBox="0 0 19 12"><path d="M0 0.500h19" stroke="#777" stroke-width="1" stroke-dasharray="1 0.500"/><path d="M0 5h19" stroke="#777" stroke-width="1" stroke-dasharray="2 1"/><path d="M0 9h19" stroke="#777" stroke-width="1" stroke-dasharray="1 1.300"/></svg>
<svg style="left:1865px;top:715px;" width="9" height="5" viewBox="0 0 9 5"><path d="M0 0h9L4.500 5z" fill="#666"/></svg>
<div style="left:1801px;top:739px;width:80px;height:26px;background:#fdfdfd;border:1px solid #b8b8b8;"></div>
<svg style="left:1865px;top:750px;" width="9" height="5" viewBox="0 0 9 5"><path d="M0 0h9L4.500 5z" fill="#666"/></svg>
<div style="left:1804px;top:771px;width:77px;height:26px;background:#fdfdfd;border:1px solid #b8b8b8;"></div>
<svg style="left:1865px;top:782px;" width="9" height="5" viewBox="0 0 9 5"><path d="M0 0h9L4.500 5z" fill="#666"/></svg>
<div style="left:1831px;top:804px;width:49px;height:29px;background:#f4f4f4;"></div>
<svg style="left:1839px;top:811.5px;" width="18" height="15" viewBox="0 0 18 15"><path d="M0.500 1.500h18 M15.500 -1l3 2.500-3 2.500 M19 7.500h-18 M3.500 5l-3 2.500 3 2.500 M0.500 13.500h18.500 M3.500 11l-3 2.500 3 2.500 M16 11l3 2.500-3 2.500" fill="none" stroke="#b4b4b4" stroke-width="1"/></svg>
<svg style="left:1865px;top:815.5px;" width="9" height="5" viewBox="0 0 9 5"><path d="M0 0h9L4.500 5z" fill="#c4c4c4"/></svg>
<div style="left:1831px;top:841px;width:49px;height:29px;background:#f4f4f4;"></div>
<svg style="left:1839px;top:848.5px;" width="18" height="15" viewBox="0 0 18 15"><path d="M0 1h18" stroke="#b0b0b0" stroke-width="1.200"/><path d="M0 5.500h18" stroke="#b0b0b0" stroke-width="2"/><path d="M0 11.500h18" stroke="#b0b0b0" stroke-width="3.600"/></svg>
<svg style="left:1865px;top:852.5px;" width="9" height="5" viewBox="0 0 9 5"><path d="M0 0h9L4.500 5z" fill="#c4c4c4"/></svg>
<div style="left:1831px;top:878px;width:49px;height:29px;background:#f4f4f4;"></div>
<svg style="left:1839px;top:885.5px;" width="18" height="15" viewBox="0 0 18 15"><path d="M0.500 1.500h18 M15.500 -1l3 2.500-3 2.500 M19 7.500h-18 M3.500 5l-3 2.500 3 2.500 M0.500 13.500h18.500 M3.500 11l-3 2.500 3 2.500 M16 11l3 2.500-3 2.500" fill="none" stroke="#b4b4b4" stroke-width="1"/></svg>
<svg style="left:1865px;top:889.5px;" width="9" height="5" viewBox="0 0 9 5"><path d="M0 0h9L4.500 5z" fill="#c4c4c4"/></svg>
<div style="left:1831px;top:915px;width:49px;height:29px;background:#f4f4f4;"></div>
<svg style="left:1839px;top:922.5px;" width="18" height="15" viewBox="0 0 18 15"><path d="M0 1h18" stroke="#b0b0b0" stroke-width="1.200"/><path d="M0 5.500h18" stroke="#b0b0b0" stroke-width="2"/><path d="M0 11.500h18" stroke="#b0b0b0" stroke-width="3.600"/></svg>
<svg style="left:1865px;top:926.5px;" width="9" height="5" viewBox="0 0 9 5"><path d="M0 0h9L4.500 5z" fill="#c4c4c4"/></svg>
<div style="left:0px;top:1023px;width:1564px;height:30px;background:#e6e6e6;"></div>
<div style="left:0px;top:1023px;width:1540px;height:1px;background:#ababab;"></div>
<svg style="left:28px;top:1033.3px;" width="5.5" height="8.5" viewBox="0 0 5.5 8.5"><path d="M5.500 0V8.500L0 4.250z" fill="#c3c3c3"/></svg>
<svg style="left:56.7px;top:1033.3px;" width="5.5" height="8.5" viewBox="0 0 5.5 8.5"><path d="M0 0V8.500L5.500 4.250z" fill="#c3c3c3"/></svg>
<div style="left:103px;top:1023px;width:80px;height:26px;background:#fff;border:1px solid #ababab;border-top:none;border-bottom:2px solid #217346;"></div>
<span class="t" style="left:115.60px;top:1026.00px;font-size:17px;color:#217346;font-weight:700;transform:scaleX(0.9543);transform-origin:0 50%;">Sheet1</span>
<span class="t" style="left:195.00px;top:1026.00px;font-size:16.5px;color:#444444;transform:scaleX(0.9848);transform-origin:0 50%;">Sheet2</span>
<span class="t" style="left:274.00px;top:1026.00px;font-size:16.5px;color:#444444;transform:scaleX(0.9848);transform-origin:0 50%;">Sheet3</span>
<div style="left:261px;top:1027px;width:1px;height:21px;background:#ababab;"></div>
<div style="left:339.5px;top:1027px;width:1px;height:21px;background:#ababab;"></div>
<svg style="left:372px;top:1027px;" width="21" height="21" viewBox="0 0 21 21"><circle cx="10.500" cy="10.500" r="9.700" fill="none" stroke="#6a6a6a" stroke-width="1.300"/><path d="M5 10.500h11 M10.500 5v11" stroke="#6a6a6a" stroke-width="1.500"/></svg>
<div style="left:936px;top:1031px;width:3px;height:3px;background:#b3b3b3;"></div>
<div style="left:936px;top:1036px;width:3px;height:3px;background:#b3b3b3;"></div>
<div style="left:936px;top:1041px;width:3px;height:3px;background:#b3b3b3;"></div>
<div style="left:954px;top:1028px;width:585px;height:19px;background:#d9d9d9;"></div>
<div style="left:954px;top:1028px;width:19px;height:19px;background:#fff;border:1px solid #d4d4d4;"></div>
<svg style="left:960px;top:1033px;" width="5.5" height="9" viewBox="0 0 5.5 9"><path d="M5.500 0V9L0 4.500z" fill="#666"/></svg>
<div style="left:973px;top:1028px;width:507px;height:19px;background:#fff;border:1px solid #ababab;"></div>
<div style="left:1520px;top:1028px;width:19px;height:19px;background:#fff;border:1px solid #d4d4d4;"></div>
<svg style="left:1527px;top:1033px;" width="5.5" height="9" viewBox="0 0 5.5 9"><path d="M0 0V9L5.500 4.500z" fill="#666"/></svg>
<div style="left:0px;top:1052px;width:1920px;height:1px;background:#c8c8c8;"></div>
<div style="left:0px;top:1053px;width:1920px;height:25px;background:#f3f3f3;"></div>
<div style="left:0px;top:1078px;width:1920px;height:2px;background:#8794a0;"></div>
<div style="left:61px;top:1078.5px;width:70px;height:1.5px;background:#c3c9cf;"></div>
<div style="left:135px;top:1078.5px;width:69.5px;height:1.5px;background:#c3c9cf;"></div>
<div style="left:718px;top:1078.5px;width:69.5px;height:1.5px;background:#c3c9cf;"></div>
<div style="left:791px;top:1078.5px;width:69.60000000000002px;height:1.5px;background:#c3c9cf;"></div>
<div style="left:863px;top:1078.5px;width:66px;height:1.5px;background:#eef0f2;"></div>
<div style="left:936.7px;top:1078.5px;width:70.29999999999995px;height:1.5px;background:#c3c9cf;"></div>
<span class="t" style="left:7.00px;top:1060.00px;font-size:12.5px;color:#555;">Ready</span>
<span class="t" style="left:59.00px;top:1060.00px;font-size:12.5px;color:#555;transform:scaleX(0.9883);transform-origin:0 50%;">Calculate</span>
<svg style="left:132.5px;top:1057.5px;" width="15" height="15" viewBox="0 0 15 15"><rect x="2.500" y="2.500" width="12" height="12" fill="#fff" stroke="#777"/><path d="M2.500 6.500h12 M5 9h2 M8 9h2 M11 9h2 M5 12h2 M8 12h2 M11 12h2" stroke="#777"/><circle cx="3" cy="3" r="3" fill="#666"/></svg>
<span class="t" style="left:1270.00px;top:1060.00px;font-size:12.5px;color:#555;transform:scaleX(1.0083);transform-origin:0 50%;">Average: 161.67</span>
<span class="t" style="left:1414.00px;top:1060.00px;font-size:12.5px;color:#555;transform:scaleX(1.0054);transform-origin:0 50%;">Count: 13</span>
<span class="t" style="left:1485.00px;top:1060.00px;font-size:12.5px;color:#555;transform:scaleX(0.9829);transform-origin:0 50%;">Sum: 1940.04</span>
<div style="left:1581.5px;top:1053px;width:41px;height:25px;background:#c8c8c8;"></div>
<svg style="left:1595px;top:1058px;" width="13" height="13" viewBox="0 0 13 13"><rect x="0.500" y="0.500" width="12" height="12" fill="none" stroke="#555"/><path d="M0.500 4.500h12 M0.500 8.500h12 M4.500 0.500v12 M8.500 0.500v12" stroke="#555"/></svg>
<svg style="left:1636px;top:1058px;" width="14" height="13" viewBox="0 0 14 13"><rect x="0.500" y="0.500" width="13" height="12" fill="none" stroke="#555"/><rect x="3.500" y="2.500" width="7" height="8" fill="none" stroke="#555"/><path d="M5 4.500h4 M5 6.500h4 M5 8.500h4" stroke="#777"/></svg>
<svg style="left:1677px;top:1058px;" width="14" height="13" viewBox="0 0 14 13"><rect x="0.500" y="0.500" width="13" height="12" fill="none" stroke="#555"/><path d="M4.500 0.500V7.500H8.500V0.500 M0.500 8.500H8.500V7.500" fill="none" stroke="#555"/></svg>
<div style="left:1710px;top:1064px;width:9px;height:2px;background:#555;"></div>
<div style="left:1723.5px;top:1065px;width:124px;height:1px;background:#9a9a9a;"></div>
<div style="left:1783px;top:1058.5px;width:5px;height:13px;background:#555;"></div>
<svg style="left:1852.5px;top:1059.5px;" width="11" height="11" viewBox="0 0 11 11"><path d="M0 5.500h11 M5.500 0v11" stroke="#555" stroke-width="2"/></svg>
<span class="t" style="left:1880.00px;top:1060.00px;font-size:12.5px;color:#555;transform:scaleX(0.9384);transform-origin:0 50%;">100%</span>
</div></body></html>
